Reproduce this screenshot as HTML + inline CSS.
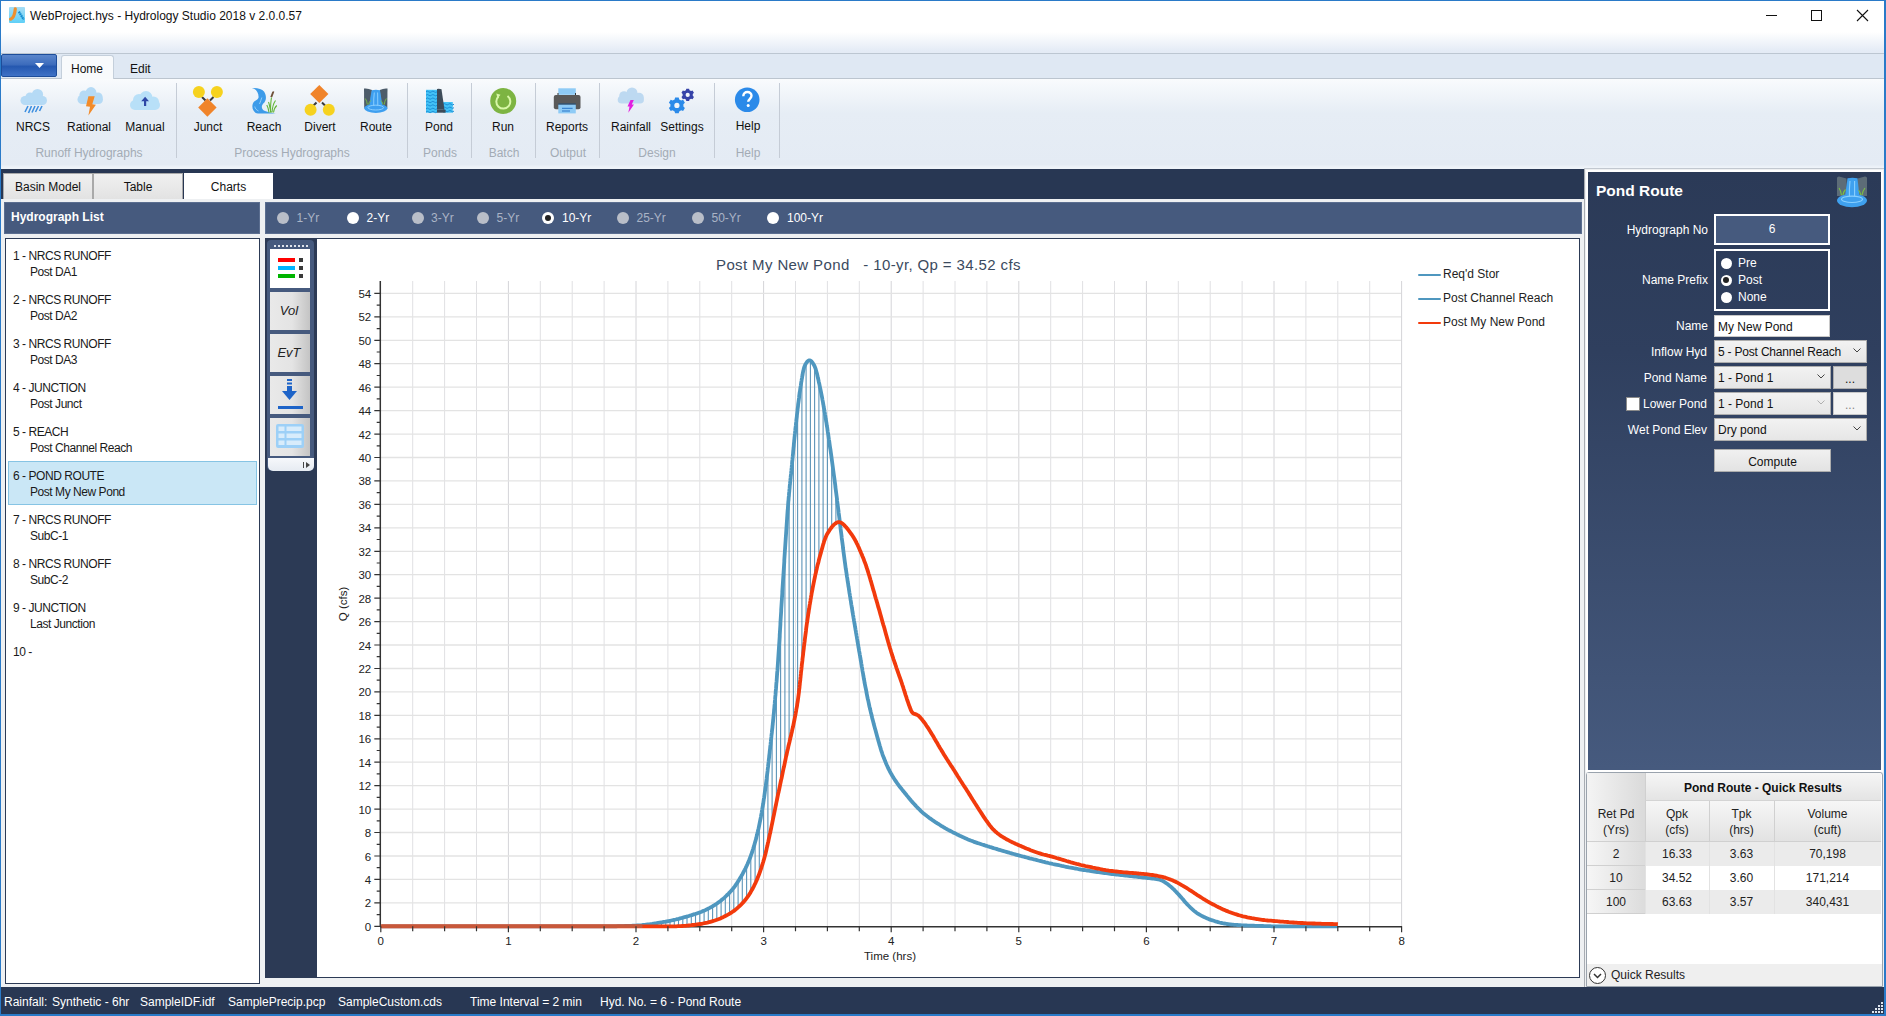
<!DOCTYPE html>
<html><head><meta charset="utf-8">
<style>
*{box-sizing:border-box;margin:0;padding:0}
html,body{width:1886px;height:1016px;overflow:hidden;background:#fff;font-family:"Liberation Sans",sans-serif;font-size:12px;color:#1a1a1a}
.a{position:absolute}
.t{position:absolute;white-space:nowrap;line-height:14px}
</style></head><body>
<div class="a" style="left:0;top:0;width:1886px;height:1016px;overflow:hidden">

<!-- window border -->
<div class="a" style="left:0;top:0;width:1886px;height:1px;background:#2a7ac8"></div>
<div class="a" style="left:0;top:0;width:1px;height:1016px;background:#2a7ac8"></div>
<div class="a" style="left:1884px;top:0;width:2px;height:1016px;background:#2a7ac8"></div>
<div class="a" style="left:0;top:1014px;width:1886px;height:2px;background:#2a7ac8"></div>

<!-- title bar -->
<div class="a" style="left:1px;top:1px;width:1883px;height:52px;background:linear-gradient(#fff 0,#fff 31px,#e4ebf5 50px,#e4ebf5 52px)"></div>
<svg class="a" style="left:8px;top:6px" width="18" height="18" viewBox="0 0 18 18">
<defs><linearGradient id="ig" x1="0" y1="0" x2="0" y2="1"><stop offset="0" stop-color="#a6ddf5"/><stop offset="1" stop-color="#5fd0f7"/></linearGradient></defs>
<rect x="1" y="1" width="16" height="16" rx="1" fill="url(#ig)"/>
<path d="M2.6,13.2C5.2,12.2 6.8,8.5 7.3,2.8" stroke="#ef8f2c" stroke-width="3.2" fill="none" stroke-linecap="round"/>
<path d="M10.9,5.6L15.7,13.6" stroke="#118bd0" stroke-width="2.3" fill="none" stroke-dasharray="1.7 0.5"/>
</svg>
<div class="t" style="left:30px;top:9px;font-size:12px;color:#111">WebProject.hys - Hydrology Studio 2018 v 2.0.0.57</div>
<div class="a" style="left:1766px;top:15px;width:11px;height:1px;background:#111"></div>
<div class="a" style="left:1811px;top:10px;width:11px;height:11px;border:1px solid #111"></div>
<svg class="a" style="left:1856px;top:9px" width="13" height="13" viewBox="0 0 13 13"><path d="M1,1L12,12M12,1L1,12" stroke="#111" stroke-width="1.1"/></svg>


<!-- ribbon tab strip -->
<div class="a" style="left:1px;top:53px;width:1883px;height:1px;background:#bcc6d1"></div>
<div class="a" style="left:1px;top:54px;width:1883px;height:24px;background:#dfe8f3"></div>
<div class="a" style="left:1px;top:78px;width:1883px;height:1px;background:#bcc5cf"></div>
<div class="a" style="left:1px;top:54px;width:56px;height:23px;border:1px solid #1d4d9a;border-radius:2px;background:linear-gradient(#5a86cc 0,#3d6cbc 45%,#2558b0 55%,#3f72c6 100%)"></div>
<svg class="a" style="left:35px;top:63px" width="9" height="6"><path d="M0,0H9L4.5,5Z" fill="#fff"/></svg>
<div class="a" style="left:61px;top:55px;width:53px;height:24px;border:1px solid #c4cfdb;border-bottom:none;border-radius:3px 3px 0 0;background:#f8fafc"></div>
<div class="t" style="left:71px;top:62px;font-size:12px;color:#111">Home</div>
<div class="t" style="left:130px;top:62px;font-size:12px;color:#111">Edit</div>


<!-- ribbon body -->
<div class="a" style="left:1px;top:79px;width:1883px;height:90px;background:linear-gradient(#f9fbfd 0,#e6edf5 38%,#e4ebf4 95%,#eef3f9 98%,#eef3f9 100%)"></div>
<div class="t" style="left:-7px;width:80px;text-align:center;top:120px;color:#111">NRCS</div>
<div class="t" style="left:49px;width:80px;text-align:center;top:120px;color:#111">Rational</div>
<div class="t" style="left:105px;width:80px;text-align:center;top:120px;color:#111">Manual</div>
<div class="t" style="left:168px;width:80px;text-align:center;top:120px;color:#111">Junct</div>
<div class="t" style="left:224px;width:80px;text-align:center;top:120px;color:#111">Reach</div>
<div class="t" style="left:280px;width:80px;text-align:center;top:120px;color:#111">Divert</div>
<div class="t" style="left:336px;width:80px;text-align:center;top:120px;color:#111">Route</div>
<div class="t" style="left:399px;width:80px;text-align:center;top:120px;color:#111">Pond</div>
<div class="t" style="left:463px;width:80px;text-align:center;top:120px;color:#111">Run</div>
<div class="t" style="left:527px;width:80px;text-align:center;top:120px;color:#111">Reports</div>
<div class="t" style="left:591px;width:80px;text-align:center;top:120px;color:#111">Rainfall</div>
<div class="t" style="left:642px;width:80px;text-align:center;top:120px;color:#111">Settings</div>
<div class="t" style="left:708px;width:80px;text-align:center;top:119px;color:#111">Help</div>
<div class="t" style="left:19px;width:140px;text-align:center;top:146px;color:#a3abb5">Runoff Hydrographs</div>
<div class="t" style="left:222px;width:140px;text-align:center;top:146px;color:#a3abb5">Process Hydrographs</div>
<div class="t" style="left:370px;width:140px;text-align:center;top:146px;color:#a3abb5">Ponds</div>
<div class="t" style="left:434px;width:140px;text-align:center;top:146px;color:#a3abb5">Batch</div>
<div class="t" style="left:498px;width:140px;text-align:center;top:146px;color:#a3abb5">Output</div>
<div class="t" style="left:587px;width:140px;text-align:center;top:146px;color:#a3abb5">Design</div>
<div class="t" style="left:678px;width:140px;text-align:center;top:146px;color:#a3abb5">Help</div>
<div class="a" style="left:176px;top:83px;width:1px;height:75px;background:#c5ccd6"></div>
<div class="a" style="left:407px;top:83px;width:1px;height:75px;background:#c5ccd6"></div>
<div class="a" style="left:471px;top:83px;width:1px;height:75px;background:#c5ccd6"></div>
<div class="a" style="left:535px;top:83px;width:1px;height:75px;background:#c5ccd6"></div>
<div class="a" style="left:599px;top:83px;width:1px;height:75px;background:#c5ccd6"></div>
<div class="a" style="left:714px;top:83px;width:1px;height:75px;background:#c5ccd6"></div>
<div class="a" style="left:779px;top:83px;width:1px;height:75px;background:#c5ccd6"></div>
<svg class="a" style="left:0;top:0" width="800" height="120" viewBox="0 0 800 120">
<g fill="#b5daf5">
 <circle cx="30" cy="97" r="4.6"/><circle cx="37.5" cy="94.5" r="5.6"/><rect x="20.5" y="96" width="26.5" height="9" rx="4.5"/>
</g>
<g stroke="#3d8fe0" stroke-width="1.6" stroke-linecap="butt">
 <path d="M28,106L25,112M31.5,106L28.5,113M35,106L32,112.5M38.5,106L35.5,112M42,106L39.5,111"/>
</g>
<g fill="#b5daf5">
 <circle cx="84" cy="95" r="4.6"/><circle cx="91" cy="92.5" r="5.4"/><circle cx="98" cy="97" r="4.6"/><rect x="77.5" y="95" width="25.5" height="9" rx="4.5"/>
</g>
<path d="M88.4,96.3L94.7,96.3L92.3,104.3L95.9,104.7L88.4,115.4L90,106.7L86,106.3Z" fill="#f28b2a"/>
<g fill="#b8e0f8">
 <circle cx="139" cy="100" r="6"/><circle cx="146" cy="97.5" r="6.5"/><circle cx="153.5" cy="102" r="5.5"/><rect x="130" y="100" width="30" height="10" rx="5"/>
</g>
<path d="M145.1,96.7L149,101.2L146.2,101.2L146.2,106H144L144,101.2L141.2,101.2Z" fill="#2d47a6"/>
<!-- junct -->
<path d="M202,97L205.5,100.5M213.5,97L210,100.5" stroke="#3b3b3b" stroke-width="2"/>
<circle cx="198.9" cy="91.9" r="6" fill="#f6d21f"/><circle cx="216.9" cy="91.9" r="6" fill="#f6d21f"/>
<path d="M207.4,98.2L216.6,107.5L207.4,116.7L198.2,107.5Z" fill="#f0842a"/>
<!-- reach -->
<path d="M251.9,88 C256,89 258.5,92 258.6,97 C258.6,99.5 255.5,100.5 254.2,101.5 C252,103.5 251.8,108 253.5,110.6 C254.8,112.5 256,113.5 258,113.5 L275.8,113.5 C272,113 266,112 263.1,110 C261,108 261.5,104.5 264.4,102.4 C266.5,100 266.5,95 264,91.5 C262,89 257,88 251.9,88Z" fill="#3d9be9"/>
<path d="M261.8,97.5C261.5,100 260,101.5 259.5,104M254.8,106.5C255,108.5 256.5,110 258.5,111" stroke="#a6d8fb" stroke-width="0.8" fill="none"/>
<path d="M270.3,97L272.3,91.8Q273.5,90.5 274.3,91.8L272.2,97.3Z" fill="#6f5039"/>
<path d="M269,112.5C268.5,109 268,107 266.8,105M270.5,112.5C270.5,108 270.8,101 271.5,97.5M272,112.5C272.3,108 273,104 275.5,100.5M273.5,112.5C274,109.5 275,107 276.8,105.5M271,112.5C270,109 269.5,104 268.5,102" stroke="#62b535" stroke-width="1.1" fill="none"/>
<!-- divert -->
<path d="M316.5,102.5L313.5,105.5M322,102.5L325,105.5" stroke="#3b3b3b" stroke-width="2"/>
<path d="M319.3,84.9L328.4,94L319.3,103.1L310.2,94Z" fill="#f0842a"/>
<circle cx="310.6" cy="109.7" r="6" fill="#f6d21f"/><circle cx="328.8" cy="109.7" r="6" fill="#f6d21f"/>
<!-- route -->
<path d="M364,88.5Q368,88 372,90L371,105L364.2,108Z" fill="#4d5c6a"/>
<path d="M387.5,88.5Q383.5,88 379.8,90L381,105L387.3,108Z" fill="#4d5c6a"/>
<path d="M371.7,90.2Q376,89.3 380,90.2L382.5,106L369.5,106Q370,97 371.7,90.2Z" fill="#3e9ff0"/>
<ellipse cx="375.8" cy="108.3" rx="11.6" ry="4.6" fill="#3e9ff0"/>
<path d="M374.3,92.5Q373.5,99 373.7,105.5M377.6,92.5L377.8,105.5" stroke="#92d2ff" stroke-width="0.9" fill="none"/>
<ellipse cx="375.8" cy="107.6" rx="7.8" ry="2.4" fill="none" stroke="#92d2ff" stroke-width="0.9"/>
<path d="M367.3,104.5Q367,101 365.3,98.5M368.6,104.5Q369,102 370.8,100.5M384.3,104.5Q384.6,101 386.3,98.5M383,104.5Q382.6,102 380.8,100.5" stroke="#7cbf45" stroke-width="0.9" fill="none"/>
<!-- pond -->
<rect x="426" y="89.8" width="11" height="22.9" fill="#42c2f6"/>
<rect x="443" y="102" width="9.8" height="10.7" fill="#42c2f6"/>
<path d="M426,91.8q1.4,-1.3 2.75,0t2.75,0t2.75,0t2.75,0M426,95.2q1.4,-1.3 2.75,0t2.75,0t2.75,0t2.75,0M426,98.6q1.4,-1.3 2.75,0t2.75,0t2.75,0t2.75,0M426,102q1.4,-1.3 2.75,0t2.75,0t2.75,0t2.75,0M443,104.3q1.4,-1.3 2.75,0t2.75,0t2.75,0t2.75,0M426,105.4q1.4,-1.3 2.75,0t2.75,0t2.75,0t2.75,0M443,107.7q1.4,-1.3 2.75,0t2.75,0t2.75,0t2.75,0M426,108.8q1.4,-1.3 2.75,0t2.75,0t2.75,0t2.75,0M443,111.1q1.4,-1.3 2.75,0t2.75,0t2.75,0t2.75,0M426,112q1.4,-1.3 2.75,0t2.75,0t2.75,0t2.75,0" stroke="#1c8ed6" stroke-width="1" fill="none"/>
<path d="M437,88.9Q439.5,88.4 441.5,89.3L444.5,109.7L437,109.7Z" fill="#3d4b59"/>
<rect x="437" y="109.7" width="8.6" height="3" fill="#3d4b59"/>
<!-- run -->
<circle cx="503.2" cy="101" r="13" fill="#7db442"/>
<path d="M498.5,96.5A7,7 0 1 0 507.5,96" stroke="#d8f7a8" stroke-width="2" fill="none"/>
<path d="M496.3,93.5L500.5,94.8L497.5,98.5Z" fill="#d8f7a8"/>
<!-- reports -->
<rect x="558.3" y="88.3" width="17.5" height="6.5" fill="#8ecbf6"/>
<rect x="557.5" y="93" width="1" height="2" fill="#333"/><rect x="575" y="93" width="1" height="2" fill="#333"/>
<rect x="553.8" y="95" width="26.7" height="14.3" rx="2" fill="#595959"/>
<rect x="558.3" y="103.5" width="17.5" height="1.2" fill="#1f4e7a"/>
<rect x="558.3" y="104.7" width="17.5" height="8.7" fill="#8ecbf6"/>
<rect x="562" y="107.8" width="10.6" height="1" fill="#2876c8"/><rect x="562" y="110.5" width="8" height="1" fill="#2876c8"/>
<!-- rainfall -->
<g fill="#bdd9f1">
 <circle cx="624" cy="96" r="4.8"/><circle cx="632" cy="93" r="5.5"/><circle cx="639" cy="97.5" r="4.8"/><rect x="617.7" y="96" width="26.2" height="7.6" rx="3.8"/>
</g>
<path d="M630.5,100L633.8,100L631.8,104.4L634,104.4L628.3,112.8L629.5,106.5L627.5,106.5Z" fill="#e21fe0"/>
<!-- settings -->
<g transform="translate(676.9,105.4)" fill="#2b8ae9"><path d="M-1.8,-7H1.8L2.3,-5.2L4.3,-4.1L6.2,-4.9L8,-1.8L6.5,-0.3V1.9L8,3.4L6.2,6.5L4.3,5.7L2.3,6.8L1.8,8.6H-1.8L-2.3,6.8L-4.3,5.7L-6.2,6.5L-8,3.4L-6.5,1.9V-0.3L-8,-1.8L-6.2,-4.9L-4.3,-4.1L-2.3,-5.2Z" transform="translate(0,-0.8)"/></g>
<circle cx="676.9" cy="105.4" r="2.6" fill="#f0f4f9"/>
<g transform="translate(687.7,94.9) scale(0.78)" fill="#3642a8"><path d="M-1.8,-7H1.8L2.3,-5.2L4.3,-4.1L6.2,-4.9L8,-1.8L6.5,-0.3V1.9L8,3.4L6.2,6.5L4.3,5.7L2.3,6.8L1.8,8.6H-1.8L-2.3,6.8L-4.3,5.7L-6.2,6.5L-8,3.4L-6.5,1.9V-0.3L-8,-1.8L-6.2,-4.9L-4.3,-4.1L-2.3,-5.2Z" transform="translate(0,-0.8)"/></g>
<circle cx="687.7" cy="94.9" r="2.1" fill="#f2f5fa"/>
<!-- help -->
<circle cx="747.2" cy="99.7" r="12.3" fill="#2b8ae9"/>
<path d="M743.3,96.3C743.3,93.6 745.2,92 747.4,92C749.8,92 751.5,93.6 751.5,95.8C751.5,98.6 748.2,99 748.2,101.8" stroke="#fff" stroke-width="2.4" fill="none"/>
<circle cx="748.2" cy="105.6" r="1.5" fill="#fff"/>
</svg>

<!-- dark bar -->
<div class="a" style="left:1px;top:169px;width:1583px;height:30px;background:#283753"></div>
<div class="a" style="left:3px;top:173px;width:90px;height:27px;border:1px solid #a9a9a9;border-bottom:none;background:linear-gradient(#f0f0f0,#e2e2e2)"></div>
<div class="a" style="left:93px;top:173px;width:90px;height:27px;border:1px solid #a9a9a9;border-bottom:none;background:linear-gradient(#f0f0f0,#e2e2e2)"></div>
<div class="a" style="left:184px;top:173px;width:89px;height:27px;background:#fff"></div>
<div class="t" style="left:3px;width:90px;text-align:center;top:180px;color:#111">Basin Model</div>
<div class="t" style="left:93px;width:90px;text-align:center;top:180px;color:#111">Table</div>
<div class="t" style="left:184px;width:89px;text-align:center;top:180px;color:#111">Charts</div>


<!-- content bg -->
<div class="a" style="left:1px;top:199px;width:1585px;height:788px;background:#eef0f2"></div>
<div class="a" style="left:4px;top:202px;width:256px;height:32px;background:#465a7e;border:1px solid #5b6e90"></div>
<div class="t" style="left:11px;top:210px;font-weight:bold;color:#fff;font-size:12px">Hydrograph List</div>
<div class="a" style="left:5px;top:238px;width:255px;height:746px;background:#fff;border:1px solid #2c3a55"></div>
<div class="a" style="left:8px;top:461px;width:249px;height:44px;background:#cae7f6;border:1px solid #86c4e4"></div>
<div class="t" style="left:13px;top:249px;letter-spacing:-0.45px">1 - NRCS RUNOFF</div>
<div class="t" style="left:30px;top:265px;letter-spacing:-0.45px">Post DA1</div>
<div class="t" style="left:13px;top:293px;letter-spacing:-0.45px">2 - NRCS RUNOFF</div>
<div class="t" style="left:30px;top:309px;letter-spacing:-0.45px">Post DA2</div>
<div class="t" style="left:13px;top:337px;letter-spacing:-0.45px">3 - NRCS RUNOFF</div>
<div class="t" style="left:30px;top:353px;letter-spacing:-0.45px">Post DA3</div>
<div class="t" style="left:13px;top:381px;letter-spacing:-0.45px">4 - JUNCTION</div>
<div class="t" style="left:30px;top:397px;letter-spacing:-0.45px">Post Junct</div>
<div class="t" style="left:13px;top:425px;letter-spacing:-0.45px">5 - REACH</div>
<div class="t" style="left:30px;top:441px;letter-spacing:-0.45px">Post Channel Reach</div>
<div class="t" style="left:13px;top:469px;letter-spacing:-0.45px">6 - POND ROUTE</div>
<div class="t" style="left:30px;top:485px;letter-spacing:-0.45px">Post My New Pond</div>
<div class="t" style="left:13px;top:513px;letter-spacing:-0.45px">7 - NRCS RUNOFF</div>
<div class="t" style="left:30px;top:529px;letter-spacing:-0.45px">SubC-1</div>
<div class="t" style="left:13px;top:557px;letter-spacing:-0.45px">8 - NRCS RUNOFF</div>
<div class="t" style="left:30px;top:573px;letter-spacing:-0.45px">SubC-2</div>
<div class="t" style="left:13px;top:601px;letter-spacing:-0.45px">9 - JUNCTION</div>
<div class="t" style="left:30px;top:617px;letter-spacing:-0.45px">Last Junction</div>
<div class="t" style="left:13px;top:645px;letter-spacing:-0.45px">10 -</div>
<div class="a" style="left:265px;top:202px;width:1317px;height:32px;background:#465a7e;border:1px solid #5b6e90"></div>
<div class="a" style="left:277px;top:212px;width:12px;height:12px;border-radius:50%;background:#b9bec8"></div>
<div class="t" style="left:296.5px;top:211px;color:#aab4c6">1-Yr</div>
<div class="a" style="left:346.5px;top:212px;width:12px;height:12px;border-radius:50%;background:#fff"></div>
<div class="t" style="left:366.5px;top:211px;color:#fff">2-Yr</div>
<div class="a" style="left:412px;top:212px;width:12px;height:12px;border-radius:50%;background:#b9bec8"></div>
<div class="t" style="left:431px;top:211px;color:#aab4c6">3-Yr</div>
<div class="a" style="left:477px;top:212px;width:12px;height:12px;border-radius:50%;background:#b9bec8"></div>
<div class="t" style="left:496.5px;top:211px;color:#aab4c6">5-Yr</div>
<div class="a" style="left:542px;top:212px;width:12px;height:12px;border-radius:50%;background:#fff"></div>
<div class="a" style="left:545px;top:215px;width:6px;height:6px;border-radius:50%;background:#222"></div>
<div class="t" style="left:562px;top:211px;color:#fff">10-Yr</div>
<div class="a" style="left:617px;top:212px;width:12px;height:12px;border-radius:50%;background:#b9bec8"></div>
<div class="t" style="left:636.5px;top:211px;color:#aab4c6">25-Yr</div>
<div class="a" style="left:692px;top:212px;width:12px;height:12px;border-radius:50%;background:#b9bec8"></div>
<div class="t" style="left:711.5px;top:211px;color:#aab4c6">50-Yr</div>
<div class="a" style="left:767px;top:212px;width:12px;height:12px;border-radius:50%;background:#fff"></div>
<div class="t" style="left:787px;top:211px;color:#fff">100-Yr</div>
<div class="a" style="left:265px;top:238px;width:1315px;height:740px;background:#fff;border:1px solid #2c3a55"></div>
<div class="a" style="left:265px;top:238px;width:52px;height:740px;background:#2c3a55"></div>
<div class="a" style="left:267px;top:240px;width:47px;height:231px;background:#465a7e;border-radius:4px 4px 5px 5px"></div>
<div class="a" style="left:274px;top:245px;width:2px;height:2px;background:#dfe4ec"></div>
<div class="a" style="left:278px;top:245px;width:2px;height:2px;background:#dfe4ec"></div>
<div class="a" style="left:282px;top:245px;width:2px;height:2px;background:#dfe4ec"></div>
<div class="a" style="left:286px;top:245px;width:2px;height:2px;background:#dfe4ec"></div>
<div class="a" style="left:290px;top:245px;width:2px;height:2px;background:#dfe4ec"></div>
<div class="a" style="left:294px;top:245px;width:2px;height:2px;background:#dfe4ec"></div>
<div class="a" style="left:298px;top:245px;width:2px;height:2px;background:#dfe4ec"></div>
<div class="a" style="left:302px;top:245px;width:2px;height:2px;background:#dfe4ec"></div>
<div class="a" style="left:306px;top:245px;width:2px;height:2px;background:#dfe4ec"></div>
<div class="a" style="left:270px;top:249px;width:40px;height:39px;background:#fff"></div>
<div class="a" style="left:278px;top:258px;width:17px;height:4px;background:#ff0000"></div>
<div class="a" style="left:278px;top:266px;width:17px;height:4px;background:#00b4ff"></div>
<div class="a" style="left:278px;top:274px;width:17px;height:4px;background:#00b400"></div>
<div class="a" style="left:299px;top:258px;width:4px;height:4px;background:#3a3a3a"></div>
<div class="a" style="left:299px;top:266px;width:4px;height:4px;background:#3a3a3a"></div>
<div class="a" style="left:299px;top:274px;width:4px;height:4px;background:#3a3a3a"></div>
<div class="a" style="left:270px;top:292px;width:40px;height:38px;background:linear-gradient(90deg,#e9e9e9 0,#e4e4e4 55%,#c4c4c4 100%)"></div>
<div class="a" style="left:270px;top:334px;width:40px;height:38px;background:linear-gradient(90deg,#e9e9e9 0,#e4e4e4 55%,#c4c4c4 100%)"></div>
<div class="a" style="left:270px;top:376px;width:40px;height:38px;background:linear-gradient(90deg,#e9e9e9 0,#e4e4e4 55%,#c4c4c4 100%)"></div>
<div class="a" style="left:270px;top:418px;width:40px;height:38px;background:linear-gradient(90deg,#e9e9e9 0,#e4e4e4 55%,#c4c4c4 100%)"></div>
<div class="t" style="left:270px;width:38px;text-align:center;top:304px;font-style:italic;font-size:13px;color:#222">Vol</div>
<div class="t" style="left:270px;width:38px;text-align:center;top:346px;font-style:italic;font-size:13px;color:#222">EvT</div>
<svg class="a" style="left:270px;top:376px" width="40" height="38"><g fill="#1e64c8"><rect x="17" y="3" width="5" height="2"/><rect x="17" y="6.5" width="5" height="2"/><rect x="17" y="10" width="5" height="5"/><path d="M12,15H27L19.5,24Z"/><rect x="8" y="30" width="25" height="3"/></g></svg>
<svg class="a" style="left:270px;top:418px" width="40" height="38"><rect x="6" y="6" width="28" height="24" rx="2" fill="#9dd0f7"/><g fill="#d8ecfb"><rect x="8.5" y="8.5" width="6" height="4.5"/><rect x="16.5" y="8.5" width="15" height="4.5"/><rect x="8.5" y="15.5" width="6" height="4.5"/><rect x="16.5" y="15.5" width="15" height="4.5"/><rect x="8.5" y="22.5" width="6" height="4.5"/><rect x="16.5" y="22.5" width="15" height="4.5"/></g></svg>
<div class="a" style="left:268px;top:458px;width:46px;height:13px;background:linear-gradient(#f6f8fb,#e6ebf2);border-radius:0 0 5px 5px"></div>
<svg class="a" style="left:302px;top:461px" width="10" height="8"><rect x="1" y="1" width="1" height="6" fill="#444"/><path d="M4,1L8,4L4,7Z" fill="#444"/></svg>
<svg class="a" style="left:0;top:0" width="1886" height="1016" viewBox="0 0 1886 1016"><line x1="412.7" y1="281" x2="412.7" y2="926.3" stroke="#e0e0e3" stroke-width="1"/>
<line x1="444.6" y1="281" x2="444.6" y2="926.3" stroke="#e0e0e3" stroke-width="1"/>
<line x1="476.5" y1="281" x2="476.5" y2="926.3" stroke="#e0e0e3" stroke-width="1"/>
<line x1="508.4" y1="281" x2="508.4" y2="926.3" stroke="#d4d4d8" stroke-width="1"/>
<line x1="540.3" y1="281" x2="540.3" y2="926.3" stroke="#e0e0e3" stroke-width="1"/>
<line x1="572.2" y1="281" x2="572.2" y2="926.3" stroke="#e0e0e3" stroke-width="1"/>
<line x1="604.1" y1="281" x2="604.1" y2="926.3" stroke="#e0e0e3" stroke-width="1"/>
<line x1="636.0" y1="281" x2="636.0" y2="926.3" stroke="#d4d4d8" stroke-width="1"/>
<line x1="667.9" y1="281" x2="667.9" y2="926.3" stroke="#e0e0e3" stroke-width="1"/>
<line x1="699.8" y1="281" x2="699.8" y2="926.3" stroke="#e0e0e3" stroke-width="1"/>
<line x1="731.7" y1="281" x2="731.7" y2="926.3" stroke="#e0e0e3" stroke-width="1"/>
<line x1="763.6" y1="281" x2="763.6" y2="926.3" stroke="#d4d4d8" stroke-width="1"/>
<line x1="795.5" y1="281" x2="795.5" y2="926.3" stroke="#e0e0e3" stroke-width="1"/>
<line x1="827.4" y1="281" x2="827.4" y2="926.3" stroke="#e0e0e3" stroke-width="1"/>
<line x1="859.3" y1="281" x2="859.3" y2="926.3" stroke="#e0e0e3" stroke-width="1"/>
<line x1="891.2" y1="281" x2="891.2" y2="926.3" stroke="#d4d4d8" stroke-width="1"/>
<line x1="923.1" y1="281" x2="923.1" y2="926.3" stroke="#e0e0e3" stroke-width="1"/>
<line x1="955.0" y1="281" x2="955.0" y2="926.3" stroke="#e0e0e3" stroke-width="1"/>
<line x1="986.9" y1="281" x2="986.9" y2="926.3" stroke="#e0e0e3" stroke-width="1"/>
<line x1="1018.8" y1="281" x2="1018.8" y2="926.3" stroke="#d4d4d8" stroke-width="1"/>
<line x1="1050.7" y1="281" x2="1050.7" y2="926.3" stroke="#e0e0e3" stroke-width="1"/>
<line x1="1082.6" y1="281" x2="1082.6" y2="926.3" stroke="#e0e0e3" stroke-width="1"/>
<line x1="1114.5" y1="281" x2="1114.5" y2="926.3" stroke="#e0e0e3" stroke-width="1"/>
<line x1="1146.4" y1="281" x2="1146.4" y2="926.3" stroke="#d4d4d8" stroke-width="1"/>
<line x1="1178.3" y1="281" x2="1178.3" y2="926.3" stroke="#e0e0e3" stroke-width="1"/>
<line x1="1210.2" y1="281" x2="1210.2" y2="926.3" stroke="#e0e0e3" stroke-width="1"/>
<line x1="1242.1" y1="281" x2="1242.1" y2="926.3" stroke="#e0e0e3" stroke-width="1"/>
<line x1="1274.0" y1="281" x2="1274.0" y2="926.3" stroke="#d4d4d8" stroke-width="1"/>
<line x1="1305.9" y1="281" x2="1305.9" y2="926.3" stroke="#e0e0e3" stroke-width="1"/>
<line x1="1337.8" y1="281" x2="1337.8" y2="926.3" stroke="#e0e0e3" stroke-width="1"/>
<line x1="1369.7" y1="281" x2="1369.7" y2="926.3" stroke="#e0e0e3" stroke-width="1"/>
<line x1="1401.6" y1="281" x2="1401.6" y2="926.3" stroke="#d4d4d8" stroke-width="1"/>
<line x1="380.8" y1="902.9" x2="1401" y2="902.9" stroke="#e3e3e3" stroke-width="1.3"/>
<line x1="380.8" y1="879.4" x2="1401" y2="879.4" stroke="#e3e3e3" stroke-width="1.3"/>
<line x1="380.8" y1="856.0" x2="1401" y2="856.0" stroke="#e3e3e3" stroke-width="1.3"/>
<line x1="380.8" y1="832.5" x2="1401" y2="832.5" stroke="#e3e3e3" stroke-width="1.3"/>
<line x1="380.8" y1="809.1" x2="1401" y2="809.1" stroke="#e3e3e3" stroke-width="1.3"/>
<line x1="380.8" y1="785.7" x2="1401" y2="785.7" stroke="#e3e3e3" stroke-width="1.3"/>
<line x1="380.8" y1="762.2" x2="1401" y2="762.2" stroke="#e3e3e3" stroke-width="1.3"/>
<line x1="380.8" y1="738.8" x2="1401" y2="738.8" stroke="#e3e3e3" stroke-width="1.3"/>
<line x1="380.8" y1="715.3" x2="1401" y2="715.3" stroke="#e3e3e3" stroke-width="1.3"/>
<line x1="380.8" y1="691.9" x2="1401" y2="691.9" stroke="#e3e3e3" stroke-width="1.3"/>
<line x1="380.8" y1="668.5" x2="1401" y2="668.5" stroke="#e3e3e3" stroke-width="1.3"/>
<line x1="380.8" y1="645.0" x2="1401" y2="645.0" stroke="#e3e3e3" stroke-width="1.3"/>
<line x1="380.8" y1="621.6" x2="1401" y2="621.6" stroke="#e3e3e3" stroke-width="1.3"/>
<line x1="380.8" y1="598.1" x2="1401" y2="598.1" stroke="#e3e3e3" stroke-width="1.3"/>
<line x1="380.8" y1="574.7" x2="1401" y2="574.7" stroke="#e3e3e3" stroke-width="1.3"/>
<line x1="380.8" y1="551.3" x2="1401" y2="551.3" stroke="#e3e3e3" stroke-width="1.3"/>
<line x1="380.8" y1="527.8" x2="1401" y2="527.8" stroke="#e3e3e3" stroke-width="1.3"/>
<line x1="380.8" y1="504.4" x2="1401" y2="504.4" stroke="#e3e3e3" stroke-width="1.3"/>
<line x1="380.8" y1="480.9" x2="1401" y2="480.9" stroke="#e3e3e3" stroke-width="1.3"/>
<line x1="380.8" y1="457.5" x2="1401" y2="457.5" stroke="#e3e3e3" stroke-width="1.3"/>
<line x1="380.8" y1="434.1" x2="1401" y2="434.1" stroke="#e3e3e3" stroke-width="1.3"/>
<line x1="380.8" y1="410.6" x2="1401" y2="410.6" stroke="#e3e3e3" stroke-width="1.3"/>
<line x1="380.8" y1="387.2" x2="1401" y2="387.2" stroke="#e3e3e3" stroke-width="1.3"/>
<line x1="380.8" y1="363.7" x2="1401" y2="363.7" stroke="#e3e3e3" stroke-width="1.3"/>
<line x1="380.8" y1="340.3" x2="1401" y2="340.3" stroke="#e3e3e3" stroke-width="1.3"/>
<line x1="380.8" y1="316.9" x2="1401" y2="316.9" stroke="#e3e3e3" stroke-width="1.3"/>
<line x1="380.8" y1="293.4" x2="1401" y2="293.4" stroke="#e3e3e3" stroke-width="1.3"/>
<line x1="380.3" y1="281" x2="380.3" y2="926.8" stroke="#333" stroke-width="1.5"/>
<line x1="380.3" y1="926.8" x2="1402" y2="926.8" stroke="#333" stroke-width="1.5"/>
<path d="M648.8,924.4V926.3M653.0,923.7V926.3M657.3,923.1V926.3M661.5,922.4V926.3M665.8,921.6V926.3M670.0,920.8V926.3M674.3,919.8V926.3M678.5,918.8V926.2M682.8,917.7V926.0M687.0,916.5V925.6M691.3,915.2V925.2M695.5,913.8V924.6M699.8,912.4V924.1M704.1,910.7V923.4M708.3,908.6V922.4M712.6,906.3V921.2M716.8,903.6V919.8M721.1,900.5V918.1M725.3,896.8V916.1M729.6,892.5V913.7M733.8,887.6V910.9M738.1,881.5V907.4M742.3,874.3V903.3M746.6,866.0V898.3M750.8,855.8V891.8M755.1,842.2V883.8M759.3,824.6V873.6M763.6,800.9V860.7M767.9,768.4V843.5M772.1,730.0V823.8M776.4,683.9V802.7M780.6,620.2V782.5M784.9,552.3V762.6M789.1,493.0V743.4M793.4,449.7V725.0M797.6,409.1V701.9M801.9,378.6V664.7M806.1,363.1V629.3M810.4,360.2V600.9M814.6,366.3V578.3M818.9,382.2V560.1M823.1,403.5V544.7M827.4,429.2V533.5M831.7,458.5V527.3M835.9,490.7V522.9" stroke="#4a88b0" stroke-width="1.1" fill="none" opacity="0.9"/>
<path d="M381.3,926.3L382.4,926.3L383.8,926.3L385.3,926.3L386.8,926.3L388.3,926.3L389.8,926.3L391.3,926.3L392.8,926.3L394.3,926.3L395.8,926.3L397.3,926.3L398.8,926.3L400.3,926.3L401.8,926.3L403.3,926.3L404.8,926.3L406.3,926.3L407.8,926.3L409.3,926.3L410.8,926.3L412.3,926.3L413.8,926.3L415.3,926.3L416.8,926.3L418.3,926.3L419.8,926.3L421.3,926.3L422.8,926.3L424.3,926.3L425.8,926.3L427.3,926.3L428.8,926.3L430.3,926.3L431.8,926.3L433.3,926.3L434.8,926.3L436.3,926.3L437.8,926.3L439.3,926.3L440.8,926.3L442.3,926.3L443.8,926.3L445.3,926.3L446.8,926.3L448.3,926.3L449.8,926.3L451.3,926.3L452.8,926.3L454.3,926.3L455.8,926.3L457.3,926.3L458.8,926.3L460.3,926.3L461.8,926.3L463.3,926.3L464.8,926.3L466.3,926.3L467.8,926.3L469.3,926.3L470.8,926.3L472.3,926.3L473.8,926.3L475.3,926.3L476.8,926.3L478.3,926.3L479.8,926.3L481.3,926.3L482.8,926.3L484.3,926.3L485.8,926.3L487.3,926.3L488.8,926.3L490.3,926.3L491.8,926.3L493.3,926.3L494.8,926.3L496.3,926.3L497.8,926.3L499.3,926.3L500.8,926.3L502.3,926.3L503.8,926.3L505.3,926.3L506.8,926.3L508.3,926.3L509.8,926.3L511.3,926.3L512.8,926.3L514.3,926.3L515.8,926.3L517.3,926.3L518.8,926.3L520.3,926.3L521.8,926.3L523.3,926.3L524.8,926.3L526.3,926.3L527.8,926.3L529.3,926.3L530.8,926.3L532.3,926.3L533.8,926.3L535.3,926.3L536.8,926.3L538.3,926.3L539.8,926.3L541.3,926.3L542.8,926.3L544.3,926.3L545.8,926.3L547.3,926.3L548.8,926.3L550.3,926.3L551.8,926.3L553.3,926.3L554.8,926.3L556.3,926.3L557.8,926.3L559.3,926.3L560.8,926.3L562.3,926.3L563.8,926.3L565.3,926.3L566.8,926.3L568.3,926.3L569.8,926.3L571.3,926.3L572.8,926.3L574.3,926.3L575.8,926.3L577.3,926.3L578.8,926.3L580.3,926.3L581.8,926.3L583.3,926.3L584.8,926.3L586.3,926.3L587.8,926.3L589.3,926.3L590.8,926.3L592.3,926.3L593.8,926.3L595.3,926.3L596.8,926.3L598.3,926.3L599.8,926.3L601.3,926.3L602.8,926.3L604.3,926.3L605.8,926.3L607.3,926.3L608.8,926.3L610.3,926.3L611.8,926.3L613.3,926.3L614.8,926.3L616.3,926.3L617.8,926.2L619.3,926.2L620.8,926.2L622.3,926.1L623.8,926.1L625.3,926.0L626.8,926.0L628.3,925.9L629.8,925.9L631.3,925.8L632.8,925.7L634.3,925.7L635.8,925.6L637.3,925.5L638.8,925.4L640.3,925.3L641.8,925.2L643.3,925.0L644.8,924.9L646.2,924.7L647.7,924.5L649.2,924.3L650.7,924.1L652.2,923.9L653.7,923.6L655.2,923.4L656.6,923.2L658.1,922.9L659.6,922.7L661.1,922.5L662.6,922.2L664.0,921.9L665.5,921.7L667.0,921.4L668.5,921.1L669.9,920.8L671.4,920.5L672.9,920.2L674.3,919.8L675.8,919.5L677.2,919.1L678.7,918.8L680.1,918.4L681.6,918.0L683.0,917.6L684.5,917.2L685.9,916.8L687.4,916.4L688.8,916.0L690.2,915.5L691.7,915.1L693.1,914.6L694.5,914.2L696.0,913.7L697.4,913.2L698.8,912.7L700.2,912.2L701.6,911.7L703.0,911.1L704.4,910.5L705.7,909.9L707.1,909.2L708.4,908.6L709.7,907.9L711.1,907.1L712.4,906.4L713.6,905.6L714.9,904.8L716.2,904.0L717.4,903.2L718.6,902.3L719.8,901.4L721.0,900.5L722.2,899.5L723.3,898.6L724.5,897.6L725.6,896.5L726.6,895.5L727.7,894.5L728.8,893.4L729.8,892.3L730.8,891.2L731.8,890.1L732.8,888.9L733.7,887.8L734.6,886.6L735.5,885.3L736.3,884.1L737.2,882.9L738.0,881.6L738.8,880.3L739.6,879.0L740.3,877.8L741.1,876.5L741.8,875.2L742.6,873.9L743.3,872.5L744.0,871.2L744.7,869.9L745.4,868.5L746.0,867.2L746.7,865.8L747.3,864.5L747.9,863.1L748.5,861.7L749.1,860.3L749.6,859.0L750.2,857.6L750.7,856.2L751.2,854.7L751.7,853.3L752.2,851.9L752.6,850.5L753.1,849.0L753.5,847.6L754.0,846.2L754.4,844.7L754.8,843.3L755.2,841.8L755.6,840.4L756.0,839.0L756.4,837.5L756.7,836.0L757.1,834.6L757.4,833.1L757.8,831.7L758.1,830.2L758.5,828.7L758.8,827.3L759.1,825.8L759.4,824.3L759.7,822.9L760.0,821.4L760.3,819.9L760.6,818.5L760.9,817.0L761.1,815.5L761.4,814.0L761.7,812.6L761.9,811.1L762.2,809.6L762.4,808.1L762.7,806.7L762.9,805.2L763.2,803.7L763.4,802.2L763.6,800.7L763.8,799.2L764.1,797.8L764.3,796.3L764.5,794.8L764.7,793.3L764.9,791.8L765.1,790.3L765.3,788.8L765.5,787.4L765.7,785.9L765.9,784.4L766.1,782.9L766.3,781.4L766.5,779.9L766.7,778.4L766.8,776.9L767.0,775.5L767.2,774.0L767.4,772.5L767.6,771.0L767.7,769.5L767.9,768.0L768.1,766.5L768.2,765.0L768.4,763.5L768.6,762.0L768.7,760.6L768.9,759.1L769.1,757.6L769.2,756.1L769.4,754.6L769.6,753.1L769.7,751.6L769.9,750.1L770.1,748.6L770.2,747.1L770.4,745.6L770.6,744.2L770.7,742.7L770.9,741.2L771.0,739.7L771.2,738.2L771.4,736.7L771.5,735.2L771.7,733.7L771.9,732.2L772.0,730.7L772.2,729.2L772.4,727.8L772.5,726.3L772.7,724.8L772.8,723.3L773.0,721.8L773.1,720.3L773.3,718.8L773.4,717.3L773.6,715.8L773.7,714.3L773.9,712.8L774.0,711.3L774.1,709.8L774.3,708.3L774.4,706.9L774.5,705.4L774.7,703.9L774.8,702.4L774.9,700.9L775.1,699.4L775.2,697.9L775.3,696.4L775.5,694.9L775.6,693.4L775.7,691.9L775.8,690.4L776.0,688.9L776.1,687.4L776.2,685.9L776.3,684.4L776.4,682.9L776.6,681.4L776.7,679.9L776.8,678.5L776.9,677.0L777.0,675.5L777.1,674.0L777.2,672.5L777.4,671.0L777.5,669.5L777.6,668.0L777.7,666.5L777.8,665.0L777.9,663.5L778.0,662.0L778.1,660.5L778.2,659.0L778.3,657.5L778.4,656.0L778.5,654.5L778.6,653.0L778.7,651.5L778.8,650.0L778.9,648.5L779.0,647.0L779.1,645.5L779.2,644.0L779.3,642.5L779.4,641.0L779.5,639.5L779.6,638.0L779.7,636.6L779.7,635.1L779.8,633.6L779.9,632.1L780.0,630.6L780.1,629.1L780.2,627.6L780.3,626.1L780.4,624.6L780.4,623.1L780.5,621.6L780.6,620.1L780.7,618.6L780.8,617.1L780.9,615.6L781.0,614.1L781.1,612.6L781.2,611.1L781.2,609.6L781.3,608.1L781.4,606.6L781.5,605.1L781.6,603.6L781.7,602.1L781.8,600.6L781.9,599.1L782.0,597.6L782.1,596.1L782.2,594.6L782.3,593.1L782.3,591.6L782.4,590.1L782.5,588.6L782.6,587.1L782.7,585.6L782.8,584.1L782.9,582.7L783.0,581.2L783.1,579.7L783.2,578.2L783.3,576.7L783.4,575.2L783.5,573.7L783.6,572.2L783.7,570.7L783.8,569.2L783.9,567.7L784.0,566.2L784.1,564.7L784.2,563.2L784.3,561.7L784.3,560.2L784.4,558.7L784.5,557.2L784.6,555.7L784.7,554.2L784.8,552.7L784.9,551.2L785.0,549.7L785.1,548.2L785.2,546.7L785.3,545.2L785.4,543.7L785.5,542.2L785.6,540.7L785.7,539.2L785.8,537.7L785.9,536.2L786.0,534.8L786.1,533.3L786.2,531.8L786.3,530.3L786.4,528.8L786.5,527.3L786.6,525.8L786.7,524.3L786.8,522.8L786.9,521.3L787.0,519.8L787.1,518.3L787.2,516.8L787.3,515.3L787.4,513.8L787.5,512.3L787.6,510.8L787.8,509.3L787.9,507.8L788.0,506.3L788.1,504.8L788.2,503.3L788.3,501.8L788.5,500.3L788.6,498.8L788.7,497.3L788.9,495.9L789.0,494.4L789.1,492.9L789.3,491.4L789.4,489.9L789.6,488.4L789.7,486.9L789.8,485.4L790.0,483.9L790.1,482.4L790.3,480.9L790.4,479.4L790.6,477.9L790.7,476.4L790.9,475.0L791.1,473.5L791.2,472.0L791.4,470.5L791.5,469.0L791.7,467.5L791.8,466.0L792.0,464.5L792.1,463.0L792.2,461.5L792.4,460.0L792.5,458.5L792.7,457.0L792.8,455.5L793.0,454.1L793.1,452.6L793.2,451.1L793.4,449.6L793.5,448.1L793.7,446.6L793.8,445.1L793.9,443.6L794.1,442.1L794.2,440.6L794.4,439.1L794.5,437.6L794.7,436.1L794.8,434.6L795.0,433.2L795.1,431.7L795.3,430.2L795.4,428.7L795.6,427.2L795.8,425.7L795.9,424.2L796.1,422.7L796.3,421.2L796.4,419.7L796.6,418.2L796.8,416.8L796.9,415.3L797.1,413.8L797.3,412.3L797.4,410.8L797.6,409.3L797.8,407.8L798.0,406.3L798.1,404.8L798.3,403.3L798.5,401.9L798.7,400.4L798.9,398.9L799.1,397.4L799.2,395.9L799.4,394.4L799.6,392.9L799.9,391.4L800.1,390.0L800.3,388.5L800.5,387.0L800.8,385.5L801.0,384.0L801.2,382.5L801.5,381.1L801.7,379.6L802.0,378.1L802.2,376.6L802.5,375.2L802.7,373.7L803.0,372.2L803.3,370.7L803.7,369.3L804.0,367.8L804.5,366.4L805.1,365.0L805.8,363.7L806.6,362.5L807.6,361.3L808.7,360.5L810.0,360.4L811.2,361.1L812.2,362.2L813.0,363.4L813.8,364.7L814.5,366.0L815.1,367.4L815.6,368.8L816.0,370.2L816.4,371.7L816.8,373.1L817.2,374.6L817.5,376.0L817.8,377.5L818.2,379.0L818.5,380.4L818.8,381.9L819.2,383.4L819.5,384.8L819.8,386.3L820.1,387.8L820.4,389.2L820.7,390.7L821.0,392.2L821.3,393.6L821.6,395.1L821.9,396.6L822.2,398.1L822.4,399.5L822.7,401.0L823.0,402.5L823.2,404.0L823.5,405.4L823.7,406.9L824.0,408.4L824.3,409.9L824.5,411.3L824.8,412.8L825.0,414.3L825.3,415.8L825.5,417.3L825.7,418.7L826.0,420.2L826.2,421.7L826.5,423.2L826.7,424.7L826.9,426.2L827.2,427.6L827.4,429.1L827.6,430.6L827.8,432.1L828.1,433.6L828.3,435.0L828.5,436.5L828.7,438.0L828.9,439.5L829.2,441.0L829.4,442.5L829.6,443.9L829.8,445.4L830.0,446.9L830.2,448.4L830.5,449.9L830.7,451.4L830.9,452.9L831.1,454.3L831.3,455.8L831.5,457.3L831.7,458.8L831.9,460.3L832.1,461.8L832.3,463.3L832.5,464.7L832.7,466.2L832.9,467.7L833.1,469.2L833.3,470.7L833.5,472.2L833.7,473.7L833.9,475.2L834.1,476.6L834.3,478.1L834.5,479.6L834.7,481.1L834.9,482.6L835.1,484.1L835.3,485.6L835.4,487.1L835.6,488.5L835.8,490.0L836.0,491.5L836.2,493.0L836.4,494.5L836.6,496.0L836.8,497.5L837.0,499.0L837.1,500.4L837.3,501.9L837.5,503.4L837.7,504.9L837.9,506.4L838.1,507.9L838.3,509.4L838.5,510.9L838.6,512.4L838.8,513.8L839.0,515.3L839.2,516.8L839.4,518.3L839.6,519.8L839.7,521.3L839.9,522.8L840.1,524.3L840.3,525.8L840.5,527.2L840.6,528.7L840.8,530.2L841.0,531.7L841.2,533.2L841.4,534.7L841.6,536.2L841.7,537.7L841.9,539.2L842.1,540.6L842.3,542.1L842.5,543.6L842.7,545.1L842.9,546.6L843.0,548.1L843.2,549.6L843.4,551.1L843.6,552.5L843.8,554.0L844.0,555.5L844.2,557.0L844.4,558.5L844.6,560.0L844.8,561.5L845.0,563.0L845.2,564.4L845.4,565.9L845.6,567.4L845.8,568.9L846.1,570.4L846.3,571.9L846.5,573.3L846.7,574.8L846.9,576.3L847.2,577.8L847.4,579.3L847.6,580.8L847.8,582.2L848.1,583.7L848.3,585.2L848.5,586.7L848.8,588.2L849.0,589.7L849.2,591.1L849.4,592.6L849.7,594.1L849.9,595.6L850.2,597.1L850.4,598.5L850.6,600.0L850.9,601.5L851.1,603.0L851.3,604.5L851.6,606.0L851.8,607.4L852.1,608.9L852.3,610.4L852.5,611.9L852.8,613.4L853.0,614.8L853.3,616.3L853.5,617.8L853.8,619.3L854.0,620.8L854.3,622.2L854.5,623.7L854.8,625.2L855.0,626.7L855.3,628.2L855.5,629.6L855.8,631.1L856.0,632.6L856.3,634.1L856.5,635.5L856.8,637.0L857.0,638.5L857.3,640.0L857.5,641.5L857.8,642.9L858.0,644.4L858.3,645.9L858.5,647.4L858.8,648.9L859.0,650.3L859.3,651.8L859.6,653.3L859.8,654.8L860.1,656.2L860.3,657.7L860.6,659.2L860.8,660.7L861.1,662.2L861.3,663.6L861.6,665.1L861.8,666.6L862.1,668.1L862.3,669.6L862.5,671.0L862.8,672.5L863.1,674.0L863.3,675.5L863.6,676.9L863.8,678.4L864.1,679.9L864.4,681.4L864.6,682.9L864.9,684.3L865.2,685.8L865.5,687.3L865.8,688.7L866.1,690.2L866.4,691.7L866.6,693.2L866.9,694.6L867.2,696.1L867.5,697.6L867.8,699.0L868.2,700.5L868.5,702.0L868.8,703.4L869.1,704.9L869.4,706.4L869.8,707.8L870.1,709.3L870.5,710.8L870.8,712.2L871.2,713.7L871.5,715.1L871.9,716.6L872.2,718.0L872.6,719.5L873.0,720.9L873.4,722.4L873.7,723.8L874.1,725.3L874.5,726.7L874.9,728.2L875.3,729.6L875.7,731.1L876.1,732.5L876.5,734.0L876.9,735.4L877.3,736.9L877.7,738.3L878.1,739.8L878.5,741.2L878.9,742.6L879.3,744.1L879.7,745.5L880.2,747.0L880.6,748.4L881.0,749.8L881.5,751.3L882.0,752.7L882.4,754.1L882.9,755.5L883.5,756.9L884.0,758.3L884.6,759.7L885.1,761.1L885.7,762.5L886.3,763.9L886.9,765.3L887.5,766.6L888.1,768.0L888.8,769.3L889.5,770.7L890.1,772.0L890.9,773.3L891.6,774.6L892.4,775.9L893.1,777.2L894.0,778.5L894.8,779.7L895.6,781.0L896.5,782.2L897.3,783.4L898.2,784.6L899.1,785.8L900.0,787.0L901.0,788.2L901.9,789.4L902.8,790.5L903.8,791.7L904.7,792.9L905.7,794.0L906.6,795.2L907.6,796.4L908.5,797.5L909.5,798.7L910.4,799.8L911.4,801.0L912.4,802.1L913.4,803.2L914.4,804.3L915.4,805.4L916.4,806.5L917.5,807.6L918.5,808.7L919.6,809.7L920.7,810.8L921.8,811.8L922.9,812.8L924.0,813.8L925.2,814.7L926.4,815.6L927.6,816.6L928.8,817.5L930.0,818.4L931.2,819.2L932.4,820.1L933.7,820.9L934.9,821.8L936.2,822.6L937.4,823.4L938.7,824.2L940.0,825.0L941.2,825.8L942.5,826.5L943.8,827.3L945.1,828.1L946.4,828.8L947.7,829.6L949.0,830.3L950.4,831.0L951.7,831.7L953.0,832.4L954.4,833.0L955.7,833.7L957.0,834.4L958.4,835.0L959.8,835.7L961.1,836.3L962.5,836.9L963.8,837.6L965.2,838.2L966.6,838.8L968.0,839.4L969.3,839.9L970.7,840.5L972.1,841.0L973.5,841.6L974.9,842.1L976.4,842.6L977.8,843.1L979.2,843.5L980.6,844.0L982.1,844.5L983.5,844.9L984.9,845.4L986.3,845.8L987.8,846.3L989.2,846.7L990.6,847.2L992.1,847.6L993.5,848.1L994.9,848.5L996.4,848.9L997.8,849.4L999.2,849.8L1000.7,850.2L1002.1,850.7L1003.6,851.1L1005.0,851.5L1006.4,851.9L1007.9,852.3L1009.3,852.7L1010.8,853.2L1012.2,853.6L1013.7,854.0L1015.1,854.4L1016.5,854.8L1018.0,855.2L1019.4,855.6L1020.9,856.0L1022.3,856.4L1023.8,856.7L1025.2,857.1L1026.7,857.5L1028.1,857.9L1029.6,858.3L1031.0,858.6L1032.5,859.0L1033.9,859.4L1035.4,859.7L1036.9,860.1L1038.3,860.5L1039.8,860.8L1041.2,861.2L1042.7,861.6L1044.1,861.9L1045.6,862.3L1047.0,862.6L1048.5,863.0L1050.0,863.3L1051.4,863.6L1052.9,864.0L1054.4,864.3L1055.8,864.6L1057.3,864.9L1058.8,865.2L1060.2,865.5L1061.7,865.9L1063.2,866.2L1064.6,866.5L1066.1,866.8L1067.6,867.1L1069.0,867.4L1070.5,867.6L1072.0,867.9L1073.5,868.2L1074.9,868.5L1076.4,868.7L1077.9,869.0L1079.4,869.3L1080.8,869.5L1082.3,869.8L1083.8,870.0L1085.3,870.2L1086.8,870.5L1088.3,870.7L1089.7,870.9L1091.2,871.1L1092.7,871.4L1094.2,871.6L1095.7,871.8L1097.2,872.0L1098.6,872.2L1100.1,872.4L1101.6,872.6L1103.1,872.8L1104.6,873.0L1106.1,873.2L1107.6,873.4L1109.1,873.6L1110.5,873.8L1112.0,874.0L1113.5,874.1L1115.0,874.3L1116.5,874.5L1118.0,874.7L1119.5,874.9L1121.0,875.0L1122.5,875.2L1123.9,875.4L1125.4,875.5L1126.9,875.7L1128.4,875.9L1129.9,876.0L1131.4,876.2L1132.9,876.3L1134.4,876.5L1135.9,876.7L1137.4,876.8L1138.9,877.0L1140.3,877.2L1141.8,877.3L1143.3,877.5L1144.8,877.7L1146.3,877.9L1147.8,878.1L1149.3,878.2L1150.8,878.4L1152.3,878.5L1153.8,878.7L1155.2,878.9L1156.7,879.1L1158.2,879.4L1159.7,879.7L1161.1,880.2L1162.5,880.8L1163.8,881.5L1165.0,882.3L1166.3,883.2L1167.5,884.1L1168.7,885.0L1169.8,885.9L1171.0,886.8L1172.1,887.8L1173.2,888.9L1174.3,889.9L1175.3,891.0L1176.4,892.1L1177.4,893.2L1178.4,894.3L1179.4,895.4L1180.4,896.5L1181.4,897.6L1182.4,898.8L1183.4,899.9L1184.3,901.1L1185.3,902.2L1186.3,903.3L1187.3,904.4L1188.4,905.5L1189.4,906.5L1190.5,907.6L1191.6,908.6L1192.7,909.6L1193.8,910.6L1195.0,911.6L1196.2,912.5L1197.4,913.3L1198.7,914.1L1200.0,914.9L1201.3,915.6L1202.6,916.3L1204.0,917.0L1205.3,917.6L1206.7,918.2L1208.1,918.8L1209.5,919.4L1210.9,919.9L1212.3,920.3L1213.7,920.8L1215.2,921.3L1216.6,921.7L1218.0,922.1L1219.5,922.5L1220.9,922.8L1222.4,923.2L1223.9,923.5L1225.4,923.7L1226.8,924.0L1228.3,924.1L1229.8,924.3L1231.3,924.5L1232.8,924.6L1234.3,924.8L1235.8,924.9L1237.3,925.0L1238.8,925.1L1240.3,925.2L1241.8,925.3L1243.3,925.4L1244.8,925.5L1246.3,925.5L1247.8,925.6L1249.3,925.6L1250.8,925.7L1252.3,925.7L1253.8,925.7L1255.3,925.8L1256.8,925.8L1258.3,925.9L1259.8,925.9L1261.3,926.0L1262.8,926.0L1264.3,926.1L1265.8,926.1L1267.3,926.2L1268.8,926.2L1270.3,926.2L1271.8,926.3L1273.3,926.3L1274.8,926.3L1276.3,926.3L1277.8,926.3L1279.3,926.3L1280.8,926.3L1282.3,926.3L1283.8,926.3L1285.3,926.3L1286.8,926.3L1288.3,926.3L1289.8,926.3L1291.3,926.3L1292.8,926.3L1294.3,926.3L1295.8,926.3L1297.3,926.3L1298.8,926.3L1300.3,926.3L1301.8,926.3L1303.3,926.3L1304.8,926.3L1306.3,926.3L1307.8,926.3L1309.3,926.3L1310.8,926.3L1312.3,926.3L1313.8,926.3L1315.3,926.3L1316.8,926.3L1318.3,926.3L1319.8,926.3L1321.3,926.3L1322.8,926.3L1324.3,926.3L1325.8,926.3L1327.3,926.3L1328.8,926.3L1330.3,926.3L1331.8,926.3L1333.3,926.3L1334.8,926.3L1336.2,926.3L1337.3,926.3" stroke="#4f97bf" stroke-width="3.8" fill="none" stroke-linejoin="round"/>
<path d="M381.3,926.3L382.4,926.3L383.8,926.3L385.3,926.3L386.8,926.3L388.3,926.3L389.8,926.3L391.3,926.3L392.8,926.3L394.3,926.3L395.8,926.3L397.3,926.3L398.8,926.3L400.3,926.3L401.8,926.3L403.3,926.3L404.8,926.3L406.3,926.3L407.8,926.3L409.3,926.3L410.8,926.3L412.3,926.3L413.8,926.3L415.3,926.3L416.8,926.3L418.3,926.3L419.8,926.3L421.3,926.3L422.8,926.3L424.3,926.3L425.8,926.3L427.3,926.3L428.8,926.3L430.3,926.3L431.8,926.3L433.3,926.3L434.8,926.3L436.3,926.3L437.8,926.3L439.3,926.3L440.8,926.3L442.3,926.3L443.8,926.3L445.3,926.3L446.8,926.3L448.3,926.3L449.8,926.3L451.3,926.3L452.8,926.3L454.3,926.3L455.8,926.3L457.3,926.3L458.8,926.3L460.3,926.3L461.8,926.3L463.3,926.3L464.8,926.3L466.3,926.3L467.8,926.3L469.3,926.3L470.8,926.3L472.3,926.3L473.8,926.3L475.3,926.3L476.8,926.3L478.3,926.3L479.8,926.3L481.3,926.3L482.8,926.3L484.3,926.3L485.8,926.3L487.3,926.3L488.8,926.3L490.3,926.3L491.8,926.3L493.3,926.3L494.8,926.3L496.3,926.3L497.8,926.3L499.3,926.3L500.8,926.3L502.3,926.3L503.8,926.3L505.3,926.3L506.8,926.3L508.3,926.3L509.8,926.3L511.3,926.3L512.8,926.3L514.3,926.3L515.8,926.3L517.3,926.3L518.8,926.3L520.3,926.3L521.8,926.3L523.3,926.3L524.8,926.3L526.3,926.3L527.8,926.3L529.3,926.3L530.8,926.3L532.3,926.3L533.8,926.3L535.3,926.3L536.8,926.3L538.3,926.3L539.8,926.3L541.3,926.3L542.8,926.3L544.3,926.3L545.8,926.3L547.3,926.3L548.8,926.3L550.3,926.3L551.8,926.3L553.3,926.3L554.8,926.3L556.3,926.3L557.8,926.3L559.3,926.3L560.8,926.3L562.3,926.3L563.8,926.3L565.3,926.3L566.8,926.3L568.3,926.3L569.8,926.3L571.3,926.3L572.8,926.3L574.3,926.3L575.8,926.3L577.3,926.3L578.8,926.3L580.3,926.3L581.8,926.3L583.3,926.3L584.8,926.3L586.3,926.3L587.8,926.3L589.3,926.3L590.8,926.3L592.3,926.3L593.8,926.3L595.3,926.3L596.8,926.3L598.3,926.3L599.8,926.3L601.3,926.3L602.8,926.3L604.3,926.3L605.8,926.3L607.3,926.3L608.8,926.3L610.3,926.3L611.8,926.3L613.3,926.3L614.8,926.3L616.3,926.3L617.8,926.3L619.3,926.3L620.8,926.3L622.3,926.3L623.8,926.3L625.3,926.3L626.8,926.3L628.3,926.3L629.8,926.3L631.3,926.3L632.8,926.3L634.3,926.3L635.8,926.3L637.3,926.3L638.8,926.3L640.3,926.3L641.8,926.3L643.3,926.3L644.8,926.3L646.3,926.3L647.8,926.3L649.3,926.3L650.8,926.3L652.3,926.3L653.8,926.3L655.3,926.3L656.8,926.3L658.3,926.3L659.8,926.3L661.3,926.3L662.8,926.3L664.3,926.3L665.8,926.3L667.3,926.3L668.8,926.3L670.3,926.3L671.8,926.3L673.3,926.3L674.8,926.3L676.3,926.3L677.8,926.2L679.3,926.2L680.8,926.1L682.3,926.0L683.8,925.9L685.3,925.8L686.8,925.6L688.3,925.5L689.8,925.3L691.3,925.2L692.7,925.0L694.2,924.8L695.7,924.6L697.2,924.4L698.7,924.2L700.2,924.0L701.7,923.8L703.1,923.5L704.6,923.2L706.1,922.9L707.5,922.6L709.0,922.2L710.4,921.8L711.9,921.4L713.3,920.9L714.7,920.5L716.2,920.0L717.6,919.5L719.0,919.0L720.4,918.4L721.7,917.8L723.1,917.2L724.4,916.5L725.8,915.8L727.1,915.1L728.4,914.4L729.7,913.6L731.0,912.8L732.2,912.0L733.5,911.1L734.7,910.3L735.8,909.3L737.0,908.4L738.1,907.4L739.2,906.4L740.3,905.3L741.4,904.3L742.4,903.2L743.4,902.1L744.4,901.0L745.4,899.8L746.3,898.6L747.2,897.4L748.1,896.2L748.9,895.0L749.7,893.7L750.5,892.4L751.2,891.1L752.0,889.8L752.7,888.5L753.4,887.2L754.1,885.8L754.7,884.5L755.4,883.1L756.0,881.8L756.6,880.4L757.2,879.0L757.8,877.6L758.3,876.2L758.9,874.8L759.4,873.4L759.9,872.0L760.4,870.6L760.9,869.2L761.4,867.8L761.8,866.3L762.3,864.9L762.7,863.5L763.2,862.0L763.6,860.6L764.0,859.2L764.4,857.7L764.8,856.3L765.2,854.8L765.6,853.4L765.9,851.9L766.3,850.5L766.6,849.0L766.9,847.5L767.3,846.1L767.6,844.6L767.9,843.1L768.3,841.7L768.6,840.2L768.9,838.7L769.2,837.3L769.5,835.8L769.8,834.3L770.2,832.9L770.5,831.4L770.8,829.9L771.1,828.5L771.4,827.0L771.7,825.5L772.0,824.1L772.3,822.6L772.6,821.1L772.9,819.7L773.2,818.2L773.5,816.7L773.8,815.3L774.1,813.8L774.4,812.3L774.7,810.8L775.0,809.4L775.3,807.9L775.6,806.4L775.9,805.0L776.2,803.5L776.5,802.0L776.8,800.6L777.1,799.1L777.4,797.6L777.7,796.2L778.0,794.7L778.3,793.2L778.7,791.7L779.0,790.3L779.3,788.8L779.6,787.3L779.9,785.9L780.2,784.4L780.5,782.9L780.8,781.5L781.1,780.0L781.5,778.5L781.8,777.1L782.1,775.6L782.4,774.1L782.7,772.7L783.0,771.2L783.3,769.7L783.6,768.3L784.0,766.8L784.3,765.3L784.6,763.9L784.9,762.4L785.2,760.9L785.5,759.5L785.8,758.0L786.1,756.5L786.5,755.1L786.8,753.6L787.1,752.1L787.4,750.7L787.8,749.2L788.1,747.8L788.4,746.3L788.8,744.8L789.1,743.4L789.5,741.9L789.8,740.5L790.2,739.0L790.5,737.5L790.9,736.1L791.2,734.6L791.5,733.2L791.9,731.7L792.2,730.2L792.5,728.8L792.9,727.3L793.2,725.8L793.5,724.4L793.8,722.9L794.1,721.4L794.4,720.0L794.7,718.5L795.0,717.0L795.3,715.5L795.6,714.1L795.8,712.6L796.1,711.1L796.3,709.6L796.6,708.2L796.9,706.7L797.1,705.2L797.3,703.7L797.6,702.2L797.8,700.8L798.0,699.3L798.2,697.8L798.4,696.3L798.6,694.8L798.8,693.3L799.0,691.8L799.1,690.3L799.3,688.9L799.5,687.4L799.6,685.9L799.8,684.4L799.9,682.9L800.1,681.4L800.3,679.9L800.4,678.4L800.6,676.9L800.7,675.4L800.9,673.9L801.0,672.4L801.2,671.0L801.4,669.5L801.5,668.0L801.7,666.5L801.8,665.0L802.0,663.5L802.2,662.0L802.4,660.5L802.5,659.0L802.7,657.5L802.9,656.0L803.1,654.6L803.2,653.1L803.4,651.6L803.6,650.1L803.8,648.6L803.9,647.1L804.1,645.6L804.3,644.1L804.5,642.6L804.7,641.2L804.8,639.7L805.0,638.2L805.2,636.7L805.4,635.2L805.6,633.7L805.8,632.2L806.0,630.7L806.1,629.2L806.3,627.8L806.5,626.3L806.7,624.8L806.9,623.3L807.2,621.8L807.4,620.3L807.6,618.8L807.8,617.4L808.0,615.9L808.2,614.4L808.5,612.9L808.7,611.4L808.9,609.9L809.2,608.5L809.4,607.0L809.6,605.5L809.9,604.0L810.1,602.5L810.4,601.1L810.6,599.6L810.9,598.1L811.1,596.6L811.4,595.1L811.6,593.7L811.9,592.2L812.2,590.7L812.5,589.2L812.7,587.8L813.0,586.3L813.3,584.8L813.6,583.4L813.9,581.9L814.2,580.4L814.5,578.9L814.8,577.5L815.1,576.0L815.4,574.5L815.8,573.1L816.1,571.6L816.4,570.2L816.8,568.7L817.1,567.2L817.4,565.8L817.8,564.3L818.2,562.9L818.6,561.4L818.9,560.0L819.3,558.5L819.7,557.1L820.1,555.6L820.5,554.2L820.9,552.7L821.3,551.3L821.7,549.8L822.1,548.4L822.5,546.9L822.9,545.5L823.3,544.1L823.8,542.6L824.2,541.2L824.7,539.8L825.2,538.4L825.8,537.0L826.4,535.6L827.0,534.3L827.8,533.0L828.6,531.7L829.4,530.4L830.3,529.2L831.1,528.0L832.0,526.8L833.0,525.6L834.0,524.6L835.2,523.6L836.4,522.8L837.8,522.2L839.2,522.1L840.6,522.5L841.9,523.2L843.1,524.1L844.2,525.1L845.2,526.2L846.2,527.3L847.2,528.5L848.1,529.7L849.0,530.9L849.9,532.1L850.8,533.3L851.7,534.5L852.5,535.7L853.3,537.0L854.1,538.3L854.8,539.6L855.6,540.9L856.2,542.2L856.9,543.6L857.6,544.9L858.2,546.3L858.8,547.6L859.4,549.0L860.0,550.4L860.6,551.8L861.2,553.2L861.8,554.5L862.3,555.9L862.9,557.3L863.5,558.7L864.0,560.1L864.5,561.5L865.1,562.9L865.6,564.3L866.1,565.7L866.5,567.2L867.0,568.6L867.5,570.0L867.9,571.4L868.4,572.9L868.8,574.3L869.3,575.7L869.7,577.2L870.1,578.6L870.5,580.1L871.0,581.5L871.4,582.9L871.8,584.4L872.2,585.8L872.6,587.3L873.0,588.7L873.4,590.2L873.9,591.6L874.3,593.0L874.7,594.5L875.1,595.9L875.5,597.4L875.9,598.8L876.4,600.2L876.8,601.7L877.2,603.1L877.6,604.6L878.0,606.0L878.4,607.4L878.9,608.9L879.3,610.3L879.7,611.8L880.1,613.2L880.5,614.7L880.9,616.1L881.3,617.5L881.7,619.0L882.1,620.4L882.5,621.9L882.9,623.3L883.3,624.8L883.8,626.2L884.2,627.6L884.6,629.1L885.0,630.5L885.4,632.0L885.8,633.4L886.2,634.9L886.6,636.3L887.0,637.7L887.4,639.2L887.8,640.6L888.2,642.1L888.7,643.5L889.1,645.0L889.5,646.4L889.9,647.8L890.4,649.3L890.8,650.7L891.2,652.1L891.7,653.6L892.1,655.0L892.6,656.4L893.1,657.9L893.5,659.3L894.0,660.7L894.5,662.1L895.0,663.5L895.5,665.0L896.0,666.4L896.4,667.8L896.9,669.2L897.4,670.6L897.9,672.0L898.4,673.5L898.9,674.9L899.4,676.3L899.9,677.7L900.4,679.1L900.9,680.5L901.4,682.0L901.9,683.4L902.3,684.8L902.8,686.2L903.3,687.7L903.7,689.1L904.2,690.5L904.6,691.9L905.1,693.4L905.5,694.8L906.0,696.2L906.5,697.7L906.9,699.1L907.4,700.5L907.9,701.9L908.4,703.3L908.9,704.8L909.4,706.2L909.9,707.6L910.5,709.0L911.0,710.4L911.7,711.7L912.6,712.8L913.8,713.6L915.2,714.1L916.6,714.6L917.9,715.3L919.1,716.3L920.1,717.4L921.1,718.5L922.1,719.6L923.0,720.8L923.9,722.0L924.8,723.2L925.7,724.4L926.5,725.7L927.3,726.9L928.2,728.2L929.0,729.4L929.8,730.7L930.6,732.0L931.3,733.3L932.1,734.5L932.9,735.8L933.7,737.1L934.4,738.4L935.2,739.7L935.9,741.0L936.7,742.3L937.5,743.6L938.2,744.9L939.0,746.2L939.7,747.5L940.5,748.8L941.3,750.0L942.0,751.3L942.8,752.6L943.6,753.9L944.4,755.2L945.2,756.4L946.0,757.7L946.8,759.0L947.6,760.2L948.4,761.5L949.2,762.8L950.0,764.0L950.8,765.3L951.7,766.5L952.5,767.8L953.3,769.1L954.1,770.3L954.9,771.6L955.7,772.9L956.5,774.1L957.3,775.4L958.1,776.7L958.9,777.9L959.7,779.2L960.5,780.5L961.3,781.7L962.1,783.0L962.9,784.3L963.7,785.5L964.6,786.8L965.4,788.0L966.2,789.3L967.0,790.6L967.8,791.8L968.6,793.1L969.4,794.4L970.2,795.6L971.0,796.9L971.8,798.2L972.6,799.5L973.4,800.7L974.2,802.0L975.0,803.3L975.8,804.5L976.6,805.8L977.4,807.1L978.2,808.3L979.0,809.6L979.8,810.8L980.7,812.1L981.5,813.4L982.3,814.6L983.1,815.9L983.9,817.1L984.8,818.4L985.6,819.6L986.5,820.8L987.4,822.0L988.3,823.3L989.1,824.5L990.0,825.7L991.0,826.8L991.9,828.0L992.9,829.1L994.0,830.2L995.0,831.2L996.2,832.2L997.3,833.2L998.5,834.1L999.7,835.0L1000.9,835.8L1002.2,836.7L1003.5,837.5L1004.7,838.2L1006.0,839.0L1007.4,839.7L1008.7,840.4L1010.0,841.1L1011.4,841.8L1012.7,842.4L1014.1,843.1L1015.4,843.7L1016.8,844.3L1018.2,844.9L1019.5,845.5L1020.9,846.1L1022.3,846.7L1023.7,847.3L1025.1,847.9L1026.4,848.5L1027.8,849.0L1029.2,849.6L1030.6,850.2L1032.0,850.7L1033.4,851.2L1034.8,851.7L1036.2,852.2L1037.7,852.7L1039.1,853.2L1040.5,853.6L1042.0,854.1L1043.4,854.5L1044.9,854.8L1046.3,855.2L1047.8,855.6L1049.2,855.9L1050.7,856.3L1052.1,856.7L1053.6,857.1L1055.0,857.5L1056.4,858.0L1057.9,858.4L1059.3,858.8L1060.7,859.2L1062.2,859.7L1063.6,860.1L1065.1,860.5L1066.5,861.0L1067.9,861.4L1069.4,861.8L1070.8,862.3L1072.2,862.7L1073.7,863.1L1075.1,863.5L1076.6,863.9L1078.0,864.2L1079.5,864.6L1081.0,865.0L1082.4,865.3L1083.9,865.6L1085.3,866.0L1086.8,866.3L1088.3,866.6L1089.7,866.9L1091.2,867.2L1092.7,867.6L1094.1,867.9L1095.6,868.2L1097.1,868.5L1098.5,868.7L1100.0,869.0L1101.5,869.3L1103.0,869.6L1104.4,869.8L1105.9,870.1L1107.4,870.3L1108.9,870.6L1110.4,870.8L1111.9,871.0L1113.3,871.2L1114.8,871.4L1116.3,871.5L1117.8,871.7L1119.3,871.9L1120.8,872.0L1122.3,872.1L1123.8,872.3L1125.3,872.4L1126.8,872.5L1128.3,872.6L1129.8,872.8L1131.3,872.9L1132.8,873.0L1134.3,873.1L1135.8,873.2L1137.2,873.3L1138.7,873.5L1140.2,873.6L1141.7,873.8L1143.2,873.9L1144.7,874.1L1146.2,874.2L1147.7,874.4L1149.2,874.6L1150.7,874.8L1152.2,875.0L1153.6,875.2L1155.1,875.5L1156.6,875.7L1158.1,876.0L1159.5,876.3L1161.0,876.6L1162.5,876.9L1163.9,877.3L1165.4,877.7L1166.8,878.2L1168.2,878.7L1169.6,879.2L1171.0,879.8L1172.4,880.3L1173.8,880.9L1175.1,881.5L1176.5,882.2L1177.8,882.9L1179.1,883.6L1180.4,884.3L1181.7,885.1L1183.0,885.8L1184.3,886.6L1185.6,887.4L1186.9,888.2L1188.2,889.0L1189.4,889.8L1190.7,890.6L1191.9,891.4L1193.2,892.3L1194.4,893.1L1195.7,893.9L1196.9,894.8L1198.2,895.6L1199.5,896.4L1200.7,897.2L1202.0,898.0L1203.3,898.8L1204.5,899.5L1205.8,900.3L1207.1,901.1L1208.4,901.8L1209.7,902.6L1211.0,903.3L1212.3,904.0L1213.7,904.7L1215.0,905.4L1216.3,906.1L1217.7,906.8L1219.0,907.5L1220.4,908.1L1221.7,908.8L1223.1,909.4L1224.5,910.0L1225.8,910.6L1227.2,911.1L1228.6,911.7L1230.0,912.2L1231.4,912.7L1232.8,913.2L1234.3,913.7L1235.7,914.2L1237.1,914.6L1238.5,915.1L1240.0,915.5L1241.4,915.9L1242.9,916.3L1244.4,916.6L1245.8,916.9L1247.3,917.3L1248.7,917.6L1250.2,917.9L1251.7,918.2L1253.2,918.4L1254.6,918.7L1256.1,919.0L1257.6,919.2L1259.1,919.4L1260.6,919.6L1262.1,919.8L1263.5,920.0L1265.0,920.2L1266.5,920.3L1268.0,920.5L1269.5,920.6L1271.0,920.7L1272.5,920.9L1274.0,921.0L1275.5,921.1L1277.0,921.2L1278.5,921.3L1280.0,921.5L1281.5,921.6L1283.0,921.7L1284.5,921.8L1286.0,921.9L1287.5,922.0L1288.9,922.2L1290.4,922.3L1291.9,922.4L1293.4,922.5L1294.9,922.6L1296.4,922.7L1297.9,922.8L1299.4,922.9L1300.9,923.0L1302.4,923.0L1303.9,923.1L1305.4,923.2L1306.9,923.3L1308.4,923.3L1309.9,923.4L1311.4,923.4L1312.9,923.5L1314.4,923.5L1315.9,923.6L1317.4,923.6L1318.9,923.7L1320.4,923.7L1321.9,923.8L1323.4,923.8L1324.9,923.8L1326.4,923.9L1327.9,923.9L1329.4,923.9L1330.9,924.0L1332.4,924.0L1333.9,924.1L1335.4,924.1L1336.8,924.1L1337.9,924.2" stroke="#f23a0c" stroke-width="3.8" fill="none" stroke-linejoin="round"/>
<line x1="380.8" y1="926.3" x2="642.4" y2="926.3" stroke="#c8583a" stroke-width="3.6"/>
<path d="M380.8,926.3v6M412.7,926.3v5M444.6,926.3v5M476.5,926.3v5M508.4,926.3v6M540.3,926.3v5M572.2,926.3v5M604.1,926.3v5M636.0,926.3v6M667.9,926.3v5M699.8,926.3v5M731.7,926.3v5M763.6,926.3v6M795.5,926.3v5M827.4,926.3v5M859.3,926.3v5M891.2,926.3v6M923.1,926.3v5M955.0,926.3v5M986.9,926.3v5M1018.8,926.3v6M1050.7,926.3v5M1082.6,926.3v5M1114.5,926.3v5M1146.4,926.3v6M1178.3,926.3v5M1210.2,926.3v5M1242.1,926.3v5M1274.0,926.3v6M1305.9,926.3v5M1337.8,926.3v5M1369.7,926.3v5M1401.6,926.3v6M380.3,926.3h-6M380.3,914.6h-3.6M380.3,902.9h-6M380.3,891.1h-3.6M380.3,879.4h-6M380.3,867.7h-3.6M380.3,856.0h-6M380.3,844.3h-3.6M380.3,832.5h-6M380.3,820.8h-3.6M380.3,809.1h-6M380.3,797.4h-3.6M380.3,785.7h-6M380.3,773.9h-3.6M380.3,762.2h-6M380.3,750.5h-3.6M380.3,738.8h-6M380.3,727.1h-3.6M380.3,715.3h-6M380.3,703.6h-3.6M380.3,691.9h-6M380.3,680.2h-3.6M380.3,668.5h-6M380.3,656.7h-3.6M380.3,645.0h-6M380.3,633.3h-3.6M380.3,621.6h-6M380.3,609.9h-3.6M380.3,598.1h-6M380.3,586.4h-3.6M380.3,574.7h-6M380.3,563.0h-3.6M380.3,551.3h-6M380.3,539.5h-3.6M380.3,527.8h-6M380.3,516.1h-3.6M380.3,504.4h-6M380.3,492.7h-3.6M380.3,480.9h-6M380.3,469.2h-3.6M380.3,457.5h-6M380.3,445.8h-3.6M380.3,434.1h-6M380.3,422.3h-3.6M380.3,410.6h-6M380.3,398.9h-3.6M380.3,387.2h-6M380.3,375.5h-3.6M380.3,363.7h-6M380.3,352.0h-3.6M380.3,340.3h-6M380.3,328.6h-3.6M380.3,316.9h-6M380.3,305.1h-3.6M380.3,293.4h-6" stroke="#333" stroke-width="1.2" fill="none"/>
<g font-family="Liberation Sans, sans-serif" font-size="11.5" fill="#222"><text x="380.8" y="945" text-anchor="middle">0</text><text x="508.4" y="945" text-anchor="middle">1</text><text x="636.0" y="945" text-anchor="middle">2</text><text x="763.6" y="945" text-anchor="middle">3</text><text x="891.2" y="945" text-anchor="middle">4</text><text x="1018.8" y="945" text-anchor="middle">5</text><text x="1146.4" y="945" text-anchor="middle">6</text><text x="1274.0" y="945" text-anchor="middle">7</text><text x="1401.6" y="945" text-anchor="middle">8</text><text x="371.2" y="930.8" text-anchor="end">0</text><text x="371.2" y="907.4" text-anchor="end">2</text><text x="371.2" y="883.9" text-anchor="end">4</text><text x="371.2" y="860.5" text-anchor="end">6</text><text x="371.2" y="837.0" text-anchor="end">8</text><text x="371.2" y="813.6" text-anchor="end">10</text><text x="371.2" y="790.2" text-anchor="end">12</text><text x="371.2" y="766.7" text-anchor="end">14</text><text x="371.2" y="743.3" text-anchor="end">16</text><text x="371.2" y="719.8" text-anchor="end">18</text><text x="371.2" y="696.4" text-anchor="end">20</text><text x="371.2" y="673.0" text-anchor="end">22</text><text x="371.2" y="649.5" text-anchor="end">24</text><text x="371.2" y="626.1" text-anchor="end">26</text><text x="371.2" y="602.6" text-anchor="end">28</text><text x="371.2" y="579.2" text-anchor="end">30</text><text x="371.2" y="555.8" text-anchor="end">32</text><text x="371.2" y="532.3" text-anchor="end">34</text><text x="371.2" y="508.9" text-anchor="end">36</text><text x="371.2" y="485.4" text-anchor="end">38</text><text x="371.2" y="462.0" text-anchor="end">40</text><text x="371.2" y="438.6" text-anchor="end">42</text><text x="371.2" y="415.1" text-anchor="end">44</text><text x="371.2" y="391.7" text-anchor="end">46</text><text x="371.2" y="368.2" text-anchor="end">48</text><text x="371.2" y="344.8" text-anchor="end">50</text><text x="371.2" y="321.4" text-anchor="end">52</text><text x="371.2" y="297.9" text-anchor="end">54</text></g></svg>
<div class="t" style="left:716px;top:256px;font-size:15px;line-height:17px;letter-spacing:0.38px;color:#3b4a5e">Post My New Pond&nbsp;&nbsp;&nbsp;- 10-yr, Qp = 34.52 cfs</div>
<div class="a" style="left:1418px;top:273.5px;width:23px;height:2.2px;background:#4f97bf;border-radius:1px"></div>
<div class="t" style="left:1443px;top:267.0px;color:#222">Req'd Stor</div>
<div class="a" style="left:1418px;top:297.7px;width:23px;height:2.2px;background:#4f97bf;border-radius:1px"></div>
<div class="t" style="left:1443px;top:291.2px;color:#222">Post Channel Reach</div>
<div class="a" style="left:1418px;top:321.9px;width:23px;height:2.2px;background:#f23a0c;border-radius:1px"></div>
<div class="t" style="left:1443px;top:315.4px;color:#222">Post My New Pond</div>
<div class="t" style="left:320px;top:597px;width:46px;text-align:center;transform:rotate(-90deg);color:#222;font-size:11.5px">Q (cfs)</div>
<div class="t" style="left:840px;top:949px;width:100px;text-align:center;color:#222;font-size:11.5px">Time (hrs)</div>
<div class="a" style="left:1584px;top:169px;width:300px;height:818px;background:#eef0f2"></div>
<div class="a" style="left:1584px;top:169px;width:1px;height:818px;background:#a8acb2"></div>
<div class="a" style="left:1586px;top:170px;width:297px;height:602px;background:#fff"></div>
<div class="a" style="left:1588px;top:172px;width:293px;height:598px;background:linear-gradient(#2b3a57 0,#2f3f5e 30%,#465a7e 100%)"></div>
<div class="t" style="left:1596px;top:182px;font-size:15.5px;line-height:18px;font-weight:bold;color:#fff">Pond Route</div>
<svg class="a" style="left:1836px;top:175px" width="32" height="34" viewBox="0 0 32 34">
<path d="M1,3 Q1,1.5 3,1.5 L10.5,3.5 L11,21 L1,21Z" fill="#5d6c77"/>
<path d="M21.5,3.5 L29,1.5 Q31,1.5 31,3 L31,21 L21,21Z" fill="#5d6c77"/>
<path d="M11.5,3.2 Q16.5,2.4 21.5,3.2 L23.5,22 L9,22 Q10.2,12 11.5,3.2Z" fill="#3fa1ef"/>
<ellipse cx="16" cy="25.5" rx="15" ry="6.8" fill="#3fa1ef"/>
<ellipse cx="16" cy="24.3" rx="10.5" ry="3.2" fill="none" stroke="#8ad0ff" stroke-width="1.1"/>
<path d="M14,6 Q13.2,14 13.4,21 M18.6,6 L18.6,21" stroke="#8ad0ff" stroke-width="1.1" fill="none"/>
<path d="M5.5,20 Q5,16 3,13 M7,20 Q7.5,16.5 9.5,14.5 M26,20 Q26.5,16 29,13 M24.8,20 Q24.3,17 22.5,15" stroke="#7cc242" stroke-width="1.1" fill="none"/>
</svg>
<div class="t" style="left:1558px;width:150px;text-align:right;top:223px;color:#fff">Hydrograph No</div>
<div class="a" style="left:1714px;top:214px;width:116px;height:31px;border:2px solid #fff;background:#465a7e"></div>
<div class="t" style="left:1714px;width:116px;text-align:center;top:222px;color:#fff">6</div>
<div class="t" style="left:1558px;width:150px;text-align:right;top:273px;color:#fff">Name Prefix</div>
<div class="a" style="left:1714px;top:249px;width:116px;height:62px;border:2px solid #fff"></div>
<div class="a" style="left:1720.5px;top:257.7px;width:11px;height:11px;border-radius:50%;background:#fff"></div>
<div class="t" style="left:1738px;top:256.2px;color:#fff">Pre</div>
<div class="a" style="left:1720.5px;top:274.8px;width:11px;height:11px;border-radius:50%;background:#fff"></div>
<div class="a" style="left:1723px;top:277.3px;width:6px;height:6px;border-radius:50%;background:#222"></div>
<div class="t" style="left:1738px;top:273.3px;color:#fff">Post</div>
<div class="a" style="left:1720.5px;top:291.9px;width:11px;height:11px;border-radius:50%;background:#fff"></div>
<div class="t" style="left:1738px;top:290.4px;color:#fff">None</div>
<div class="t" style="left:1558px;width:150px;text-align:right;top:319px;color:#fff">Name</div>
<div class="a" style="left:1714px;top:315px;width:116px;height:22px;background:#fff;border:1px solid #c8c8c8"></div>
<div class="t" style="left:1718px;top:320px;color:#111">My New Pond</div>
<div class="t" style="left:1557px;width:150px;text-align:right;top:345px;color:#fff">Inflow Hyd</div>
<div class="a" style="left:1714px;top:340px;width:153px;height:23px;background:linear-gradient(#f2f2f2,#e6e6e6);border:1px solid #adadad"></div>
<div class="t" style="left:1718px;top:345px;color:#111;letter-spacing:-0.2px">5 - Post Channel Reach</div>
<svg class="a" style="left:1853px;top:348px" width="8" height="5"><path d="M0.5,0.5L4,4L7.5,0.5" stroke="#444" stroke-width="1" fill="none"/></svg>
<div class="t" style="left:1557px;width:150px;text-align:right;top:371px;color:#fff">Pond Name</div>
<div class="a" style="left:1714px;top:366px;width:117px;height:23px;background:linear-gradient(#f2f2f2,#e6e6e6);border:1px solid #adadad"></div>
<div class="t" style="left:1718px;top:371px;color:#111">1 - Pond 1</div>
<svg class="a" style="left:1817px;top:374px" width="8" height="5"><path d="M0.5,0.5L4,4L7.5,0.5" stroke="#444" stroke-width="1" fill="none"/></svg>
<div class="a" style="left:1833px;top:366px;width:34px;height:23px;background:#dddddd;border:1px solid #adadad"></div>
<div class="t" style="left:1833px;width:34px;text-align:center;top:372px;color:#111">...</div>
<div class="a" style="left:1626px;top:397px;width:14px;height:14px;background:#fff;border:1px solid #8a8a8a"></div>
<div class="t" style="left:1557px;width:150px;text-align:right;top:397px;color:#fff">Lower Pond</div>
<div class="a" style="left:1714px;top:392px;width:117px;height:23px;background:linear-gradient(#f2f2f2,#e6e6e6);border:1px solid #adadad"></div>
<div class="t" style="left:1718px;top:397px;color:#111">1 - Pond 1</div>
<svg class="a" style="left:1817px;top:400px" width="8" height="5"><path d="M0.5,0.5L4,4L7.5,0.5" stroke="#b0b0b0" stroke-width="1" fill="none"/></svg>
<div class="a" style="left:1833px;top:392px;width:34px;height:23px;background:#f4f4f4;border:1px solid #c8c8c8"></div>
<div class="t" style="left:1833px;width:34px;text-align:center;top:398px;color:#888">...</div>
<div class="t" style="left:1557px;width:150px;text-align:right;top:423px;color:#fff">Wet Pond Elev</div>
<div class="a" style="left:1714px;top:418px;width:153px;height:23px;background:linear-gradient(#f2f2f2,#e6e6e6);border:1px solid #adadad"></div>
<div class="t" style="left:1718px;top:423px;color:#111">Dry pond</div>
<svg class="a" style="left:1853px;top:426px" width="8" height="5"><path d="M0.5,0.5L4,4L7.5,0.5" stroke="#444" stroke-width="1" fill="none"/></svg>
<div class="a" style="left:1714px;top:449px;width:117px;height:23px;background:linear-gradient(#f0f0f0,#e3e3e3);border:1px solid #adadad"></div>
<div class="t" style="left:1714px;width:117px;text-align:center;top:455px;color:#111">Compute</div>
<div class="a" style="left:1586px;top:772px;width:297px;height:215px;background:#fff;border:1px solid #9aa3ad;border-radius:3px 3px 0 0"></div>
<div class="a" style="left:1587px;top:773px;width:58px;height:68px;background:linear-gradient(90deg,#f4f4f4,#dadada)"></div>
<div class="a" style="left:1645px;top:773px;width:236px;height:28px;background:linear-gradient(#f6f6f6,#e4e4e4);border-left:1px solid #d0d0d0;border-bottom:1px solid #d4d4d4"></div>
<div class="t" style="left:1645px;width:236px;text-align:center;top:781px;font-weight:bold;color:#111">Pond Route - Quick Results</div>
<div class="a" style="left:1587px;top:801px;width:58px;height:41px;background:linear-gradient(90deg,#f4f4f4,#dadada);border-bottom:1px solid #d0d0d0"></div>
<div class="t" style="left:1587px;width:58px;text-align:center;top:807px;color:#222">Ret Pd</div>
<div class="t" style="left:1587px;width:58px;text-align:center;top:823px;color:#222">(Yrs)</div>
<div class="a" style="left:1645px;top:801px;width:64px;height:41px;background:linear-gradient(#f6f6f6,#e2e2e2);border-left:1px solid #d0d0d0;border-bottom:1px solid #d0d0d0"></div>
<div class="t" style="left:1645px;width:64px;text-align:center;top:807px;color:#222">Qpk</div>
<div class="t" style="left:1645px;width:64px;text-align:center;top:823px;color:#222">(cfs)</div>
<div class="a" style="left:1709px;top:801px;width:65px;height:41px;background:linear-gradient(#f6f6f6,#e2e2e2);border-left:1px solid #d0d0d0;border-bottom:1px solid #d0d0d0"></div>
<div class="t" style="left:1709px;width:65px;text-align:center;top:807px;color:#222">Tpk</div>
<div class="t" style="left:1709px;width:65px;text-align:center;top:823px;color:#222">(hrs)</div>
<div class="a" style="left:1774px;top:801px;width:107px;height:41px;background:linear-gradient(#f6f6f6,#e2e2e2);border-left:1px solid #d0d0d0;border-bottom:1px solid #d0d0d0"></div>
<div class="t" style="left:1774px;width:107px;text-align:center;top:807px;color:#222">Volume</div>
<div class="t" style="left:1774px;width:107px;text-align:center;top:823px;color:#222">(cuft)</div>
<div class="a" style="left:1587px;top:842px;width:58px;height:24px;background:linear-gradient(90deg,#f6f6f6,#dcdcdc);border-bottom:1px solid #d0d0d0"></div>
<div class="t" style="left:1587px;width:58px;text-align:center;top:847px;color:#222">2</div>
<div class="a" style="left:1645px;top:842px;width:236px;height:24px;background:#ebebeb"></div>
<div class="a" style="left:1645px;top:842px;width:1px;height:24px;background:#e2e2e2"></div>
<div class="t" style="left:1645px;width:64px;text-align:center;top:847px;color:#222">16.33</div>
<div class="a" style="left:1709px;top:842px;width:1px;height:24px;background:#e2e2e2"></div>
<div class="t" style="left:1709px;width:65px;text-align:center;top:847px;color:#222">3.63</div>
<div class="a" style="left:1774px;top:842px;width:1px;height:24px;background:#e2e2e2"></div>
<div class="t" style="left:1774px;width:107px;text-align:center;top:847px;color:#222">70,198</div>
<div class="a" style="left:1587px;top:866px;width:58px;height:24px;background:linear-gradient(90deg,#f6f6f6,#dcdcdc);border-bottom:1px solid #d0d0d0"></div>
<div class="t" style="left:1587px;width:58px;text-align:center;top:871px;color:#222">10</div>
<div class="a" style="left:1645px;top:866px;width:236px;height:24px;background:#ffffff"></div>
<div class="a" style="left:1645px;top:866px;width:1px;height:24px;background:#e2e2e2"></div>
<div class="t" style="left:1645px;width:64px;text-align:center;top:871px;color:#222">34.52</div>
<div class="a" style="left:1709px;top:866px;width:1px;height:24px;background:#e2e2e2"></div>
<div class="t" style="left:1709px;width:65px;text-align:center;top:871px;color:#222">3.60</div>
<div class="a" style="left:1774px;top:866px;width:1px;height:24px;background:#e2e2e2"></div>
<div class="t" style="left:1774px;width:107px;text-align:center;top:871px;color:#222">171,214</div>
<div class="a" style="left:1587px;top:890px;width:58px;height:24px;background:linear-gradient(90deg,#f6f6f6,#dcdcdc);border-bottom:1px solid #d0d0d0"></div>
<div class="t" style="left:1587px;width:58px;text-align:center;top:895px;color:#222">100</div>
<div class="a" style="left:1645px;top:890px;width:236px;height:24px;background:#ebebeb"></div>
<div class="a" style="left:1645px;top:890px;width:1px;height:24px;background:#e2e2e2"></div>
<div class="t" style="left:1645px;width:64px;text-align:center;top:895px;color:#222">63.63</div>
<div class="a" style="left:1709px;top:890px;width:1px;height:24px;background:#e2e2e2"></div>
<div class="t" style="left:1709px;width:65px;text-align:center;top:895px;color:#222">3.57</div>
<div class="a" style="left:1774px;top:890px;width:1px;height:24px;background:#e2e2e2"></div>
<div class="t" style="left:1774px;width:107px;text-align:center;top:895px;color:#222">340,431</div>
<div class="a" style="left:1587px;top:964px;width:295px;height:22px;background:#efefef"></div>
<svg class="a" style="left:1588px;top:966px" width="20" height="20"><circle cx="9.5" cy="9.5" r="8" fill="#fff" stroke="#333" stroke-width="1"/><path d="M6,8L9.5,11.5L13,8" stroke="#333" stroke-width="1.5" fill="none"/></svg>
<div class="t" style="left:1611px;top:968px;color:#222">Quick Results</div>

<div class="a" style="left:1584px;top:168px;width:300px;height:1px;background:#c2c8d0"></div>

<!-- status bar -->
<div class="a" style="left:1px;top:987px;width:1883px;height:27px;background:#283753"></div>
<div class="t" style="left:4px;top:995px;color:#fff">Rainfall:</div>
<div class="t" style="left:52px;top:995px;color:#fff">Synthetic - 6hr</div>
<div class="t" style="left:140px;top:995px;color:#fff">SampleIDF.idf</div>
<div class="t" style="left:228px;top:995px;color:#fff">SamplePrecip.pcp</div>
<div class="t" style="left:338px;top:995px;color:#fff">SampleCustom.cds</div>
<div class="t" style="left:470px;top:995px;color:#fff">Time Interval = 2 min</div>
<div class="t" style="left:600px;top:995px;color:#fff">Hyd. No. = 6 - Pond Route</div>

<!--grip-->
<div class="a" style="left:1881px;top:1002px;width:2px;height:2px;background:#dfe5ee"></div>
<div class="a" style="left:1878px;top:1005px;width:2px;height:2px;background:#dfe5ee"></div>
<div class="a" style="left:1881px;top:1005px;width:2px;height:2px;background:#dfe5ee"></div>
<div class="a" style="left:1875px;top:1008px;width:2px;height:2px;background:#dfe5ee"></div>
<div class="a" style="left:1878px;top:1008px;width:2px;height:2px;background:#dfe5ee"></div>
<div class="a" style="left:1881px;top:1008px;width:2px;height:2px;background:#dfe5ee"></div>
<div class="a" style="left:1872px;top:1011px;width:2px;height:2px;background:#dfe5ee"></div>
<div class="a" style="left:1875px;top:1011px;width:2px;height:2px;background:#dfe5ee"></div>
<div class="a" style="left:1878px;top:1011px;width:2px;height:2px;background:#dfe5ee"></div>
<div class="a" style="left:1881px;top:1011px;width:2px;height:2px;background:#dfe5ee"></div>

</div>
</body></html>
